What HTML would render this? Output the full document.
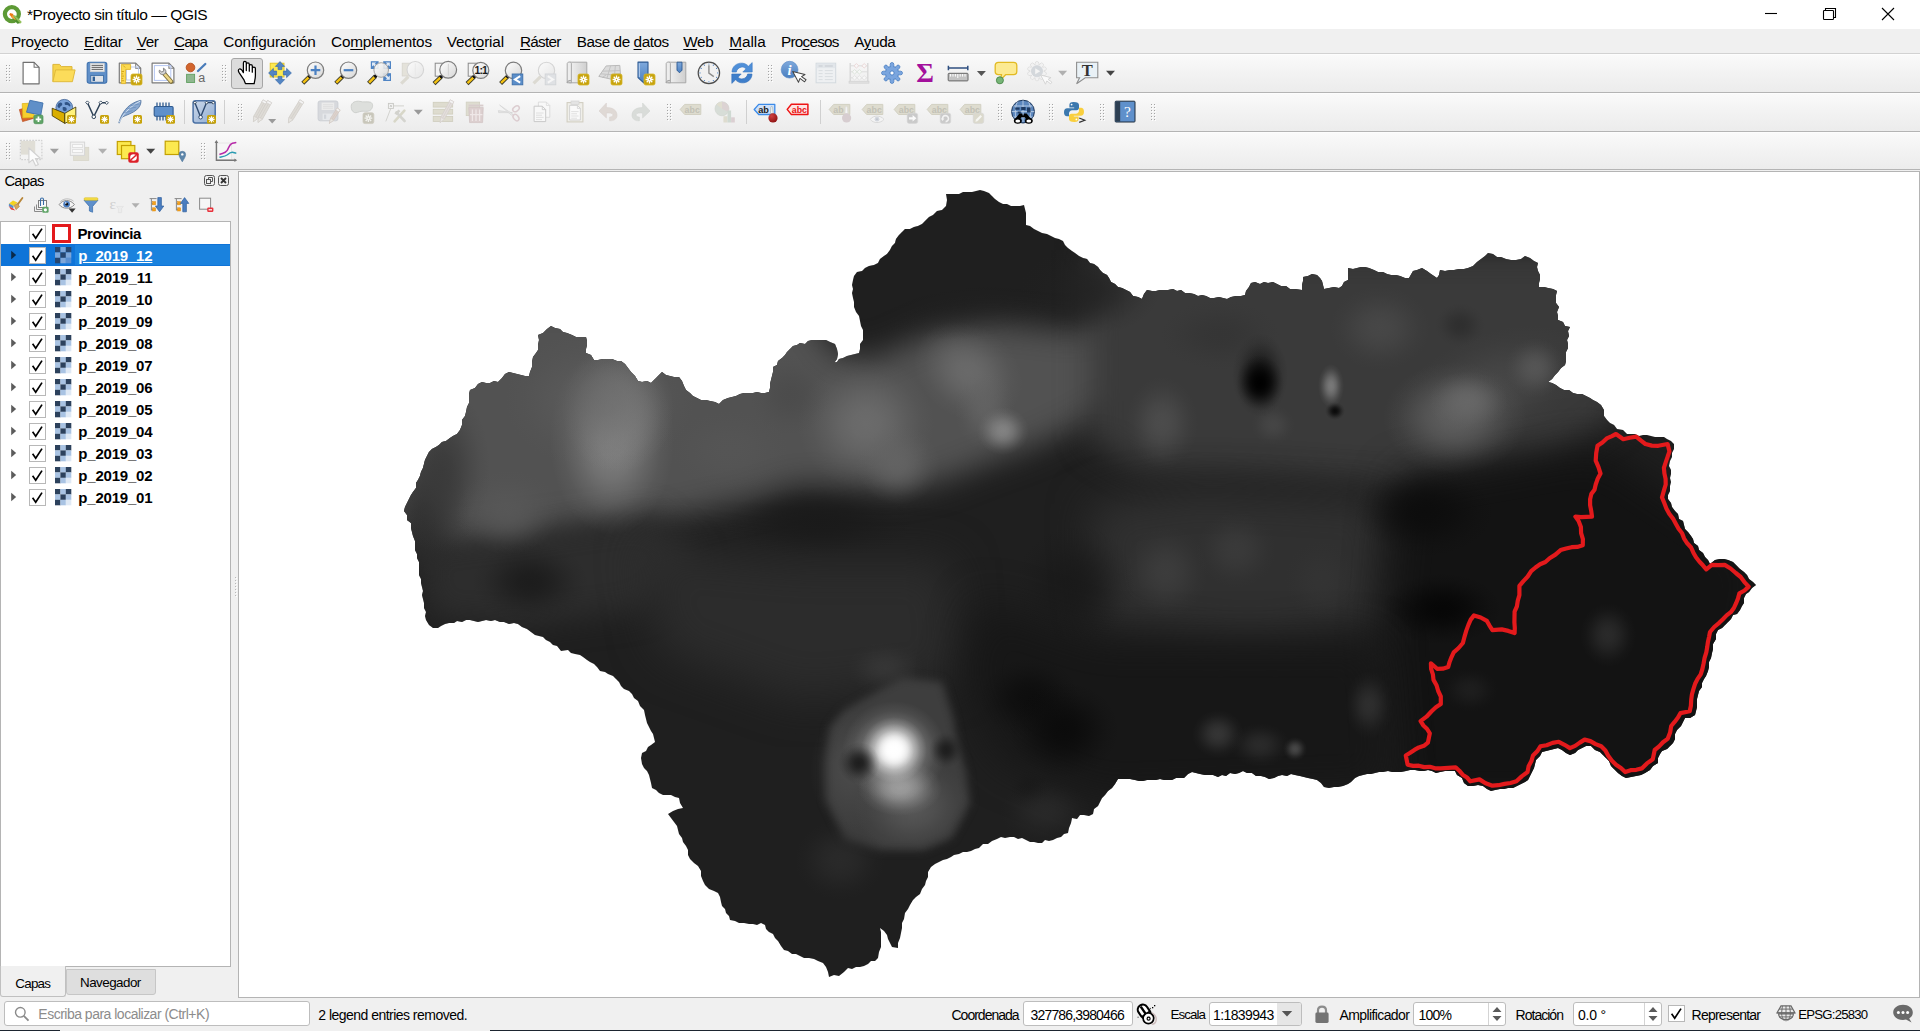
<!DOCTYPE html>
<html lang="es"><head><meta charset="utf-8"><title>*Proyecto sin título — QGIS</title>
<style>
html,body{margin:0;padding:0;}
body{width:1920px;height:1031px;overflow:hidden;background:#f0f0f0;position:relative;font-family:"Liberation Sans", sans-serif;}
.t{position:absolute;white-space:pre;line-height:1;}
.t u{text-decoration:underline;text-underline-offset:1.5px;text-decoration-thickness:1px;}
.abs{position:absolute;}
#title{left:0;top:0;width:1920px;height:29px;background:#fff;}
#menubar{left:0;top:29px;width:1920px;height:24px;background:#f0f0f0;}
.tb{left:0;width:1920px;background:linear-gradient(#fafafa,#f3f3f3 45%,#ececec);border-top:1px solid #fdfdfd;box-sizing:border-box;}
.tbline{left:0;width:1920px;height:1px;background:#b4b4b4;}
.hdl{width:3px;height:22px;background-image:radial-gradient(circle at .5px .5px,#a8a8a8 .55px,transparent .7px);background-size:3px 3px;}
.hdl2{width:4px;height:22px;}
.sep{width:1px;height:24px;background:#d0d0d0;}
.d{position:absolute;width:1px;height:1px;background:#a4a4a4;box-shadow:1px 1px 0 #fff;}
#canvas{left:238px;top:171px;width:1682px;height:827px;background:#fff;border:1px solid #b4b4b4;box-sizing:border-box;}
.mapsvg{position:absolute;left:239px;top:172px;}
#tree{left:0;top:221px;width:231px;height:746px;background:#fff;border:1px solid #b4b4b4;box-sizing:border-box;}
.cb{width:17px;height:17px;background:#fff;border:1px solid #b8b8b8;box-sizing:border-box;}
.ico{position:absolute;width:24px;height:24px;overflow:visible;}
.inp{background:#fff;border:1px solid #bdbdbd;border-radius:3px;box-sizing:border-box;}
</style></head>
<body>
<div id="title" class="abs"></div>
<svg class="abs" style="left:1740px;top:0" width="180" height="29" viewBox="1740 0 180 29" fill="none" stroke="#000" stroke-width="1.1"><path d="M1765 13.5H1777"/><rect x="1823.5" y="10.5" width="10" height="9" rx="0.8"/><path d="M1825.5 10.5V8.5H1835.5V17.5H1833.5"/><path d="M1882 8L1894 20M1894 8L1882 20"/></svg>
<div id="menubar" class="abs"></div>
<div class="abs tbline" style="top:53px;background:#d2d2d2"></div>
<div class="abs tb" style="top:54px;height:38px"></div>
<div class="abs tb" style="top:93px;height:38px"></div>
<div class="abs tb" style="top:132px;height:37px"></div>
<div class="abs tbline" style="top:92px"></div>
<div class="abs tbline" style="top:131px"></div>
<div class="abs tbline" style="top:169px"></div>
<i class="d" style="left:6px;top:65px"></i><i class="d" style="left:6px;top:68px"></i><i class="d" style="left:6px;top:71px"></i><i class="d" style="left:6px;top:74px"></i><i class="d" style="left:6px;top:77px"></i><i class="d" style="left:6px;top:80px"></i><i class="d" style="left:9px;top:65px"></i><i class="d" style="left:9px;top:68px"></i><i class="d" style="left:9px;top:71px"></i><i class="d" style="left:9px;top:74px"></i><i class="d" style="left:9px;top:77px"></i><i class="d" style="left:9px;top:80px"></i>
<i class="d" style="left:222px;top:65px"></i><i class="d" style="left:222px;top:68px"></i><i class="d" style="left:222px;top:71px"></i><i class="d" style="left:222px;top:74px"></i><i class="d" style="left:222px;top:77px"></i><i class="d" style="left:222px;top:80px"></i><i class="d" style="left:225px;top:65px"></i><i class="d" style="left:225px;top:68px"></i><i class="d" style="left:225px;top:71px"></i><i class="d" style="left:225px;top:74px"></i><i class="d" style="left:225px;top:77px"></i><i class="d" style="left:225px;top:80px"></i>
<i class="d" style="left:768px;top:65px"></i><i class="d" style="left:768px;top:68px"></i><i class="d" style="left:768px;top:71px"></i><i class="d" style="left:768px;top:74px"></i><i class="d" style="left:768px;top:77px"></i><i class="d" style="left:768px;top:80px"></i><i class="d" style="left:771px;top:65px"></i><i class="d" style="left:771px;top:68px"></i><i class="d" style="left:771px;top:71px"></i><i class="d" style="left:771px;top:74px"></i><i class="d" style="left:771px;top:77px"></i><i class="d" style="left:771px;top:80px"></i>
<i class="d" style="left:6px;top:104px"></i><i class="d" style="left:6px;top:107px"></i><i class="d" style="left:6px;top:110px"></i><i class="d" style="left:6px;top:113px"></i><i class="d" style="left:6px;top:116px"></i><i class="d" style="left:6px;top:119px"></i><i class="d" style="left:9px;top:104px"></i><i class="d" style="left:9px;top:107px"></i><i class="d" style="left:9px;top:110px"></i><i class="d" style="left:9px;top:113px"></i><i class="d" style="left:9px;top:116px"></i><i class="d" style="left:9px;top:119px"></i>
<i class="d" style="left:238px;top:104px"></i><i class="d" style="left:238px;top:107px"></i><i class="d" style="left:238px;top:110px"></i><i class="d" style="left:238px;top:113px"></i><i class="d" style="left:238px;top:116px"></i><i class="d" style="left:238px;top:119px"></i><i class="d" style="left:241px;top:104px"></i><i class="d" style="left:241px;top:107px"></i><i class="d" style="left:241px;top:110px"></i><i class="d" style="left:241px;top:113px"></i><i class="d" style="left:241px;top:116px"></i><i class="d" style="left:241px;top:119px"></i>
<i class="d" style="left:667px;top:104px"></i><i class="d" style="left:667px;top:107px"></i><i class="d" style="left:667px;top:110px"></i><i class="d" style="left:667px;top:113px"></i><i class="d" style="left:667px;top:116px"></i><i class="d" style="left:667px;top:119px"></i><i class="d" style="left:670px;top:104px"></i><i class="d" style="left:670px;top:107px"></i><i class="d" style="left:670px;top:110px"></i><i class="d" style="left:670px;top:113px"></i><i class="d" style="left:670px;top:116px"></i><i class="d" style="left:670px;top:119px"></i>
<i class="d" style="left:998px;top:104px"></i><i class="d" style="left:998px;top:107px"></i><i class="d" style="left:998px;top:110px"></i><i class="d" style="left:998px;top:113px"></i><i class="d" style="left:998px;top:116px"></i><i class="d" style="left:998px;top:119px"></i><i class="d" style="left:1001px;top:104px"></i><i class="d" style="left:1001px;top:107px"></i><i class="d" style="left:1001px;top:110px"></i><i class="d" style="left:1001px;top:113px"></i><i class="d" style="left:1001px;top:116px"></i><i class="d" style="left:1001px;top:119px"></i>
<i class="d" style="left:1049px;top:104px"></i><i class="d" style="left:1049px;top:107px"></i><i class="d" style="left:1049px;top:110px"></i><i class="d" style="left:1049px;top:113px"></i><i class="d" style="left:1049px;top:116px"></i><i class="d" style="left:1049px;top:119px"></i><i class="d" style="left:1052px;top:104px"></i><i class="d" style="left:1052px;top:107px"></i><i class="d" style="left:1052px;top:110px"></i><i class="d" style="left:1052px;top:113px"></i><i class="d" style="left:1052px;top:116px"></i><i class="d" style="left:1052px;top:119px"></i>
<i class="d" style="left:1100px;top:104px"></i><i class="d" style="left:1100px;top:107px"></i><i class="d" style="left:1100px;top:110px"></i><i class="d" style="left:1100px;top:113px"></i><i class="d" style="left:1100px;top:116px"></i><i class="d" style="left:1100px;top:119px"></i><i class="d" style="left:1103px;top:104px"></i><i class="d" style="left:1103px;top:107px"></i><i class="d" style="left:1103px;top:110px"></i><i class="d" style="left:1103px;top:113px"></i><i class="d" style="left:1103px;top:116px"></i><i class="d" style="left:1103px;top:119px"></i>
<i class="d" style="left:1151px;top:104px"></i><i class="d" style="left:1151px;top:107px"></i><i class="d" style="left:1151px;top:110px"></i><i class="d" style="left:1151px;top:113px"></i><i class="d" style="left:1151px;top:116px"></i><i class="d" style="left:1151px;top:119px"></i><i class="d" style="left:1154px;top:104px"></i><i class="d" style="left:1154px;top:107px"></i><i class="d" style="left:1154px;top:110px"></i><i class="d" style="left:1154px;top:113px"></i><i class="d" style="left:1154px;top:116px"></i><i class="d" style="left:1154px;top:119px"></i>
<i class="d" style="left:6px;top:143px"></i><i class="d" style="left:6px;top:146px"></i><i class="d" style="left:6px;top:149px"></i><i class="d" style="left:6px;top:152px"></i><i class="d" style="left:6px;top:155px"></i><i class="d" style="left:6px;top:158px"></i><i class="d" style="left:9px;top:143px"></i><i class="d" style="left:9px;top:146px"></i><i class="d" style="left:9px;top:149px"></i><i class="d" style="left:9px;top:152px"></i><i class="d" style="left:9px;top:155px"></i><i class="d" style="left:9px;top:158px"></i>
<i class="d" style="left:201px;top:143px"></i><i class="d" style="left:201px;top:146px"></i><i class="d" style="left:201px;top:149px"></i><i class="d" style="left:201px;top:152px"></i><i class="d" style="left:201px;top:155px"></i><i class="d" style="left:201px;top:158px"></i><i class="d" style="left:204px;top:143px"></i><i class="d" style="left:204px;top:146px"></i><i class="d" style="left:204px;top:149px"></i><i class="d" style="left:204px;top:152px"></i><i class="d" style="left:204px;top:155px"></i><i class="d" style="left:204px;top:158px"></i>
<div class="abs sep" style="left:184px;top:100px"></div>
<div class="abs sep" style="left:224px;top:100px"></div>
<div class="abs sep" style="left:746px;top:100px"></div>
<div class="abs sep" style="left:820px;top:100px"></div>
<div class="abs" style="left:231px;top:58px;width:32px;height:31px;background:#dcdcdc;border:1px solid #a6a6a6;border-radius:3px;box-sizing:border-box"></div>
<div id="canvas" class="abs"></div>
<i class="d" style="left:235px;top:577px;background:#b8b8b8"></i><i class="d" style="left:235px;top:580px;background:#b8b8b8"></i><i class="d" style="left:235px;top:583px;background:#b8b8b8"></i><i class="d" style="left:235px;top:586px;background:#b8b8b8"></i><i class="d" style="left:235px;top:589px;background:#b8b8b8"></i><i class="d" style="left:235px;top:592px;background:#b8b8b8"></i><i class="d" style="left:235px;top:595px;background:#b8b8b8"></i>
<svg class="abs" style="left:202px;top:174px" width="30" height="14" viewBox="202 174 30 14" fill="none" stroke="#555" stroke-width="1"><rect x="204.5" y="175.5" width="10" height="10" rx="2"/><rect x="206.5" y="179.5" width="4" height="4"/><path d="M208.5 179.5V177.5H212.5V181.5H210.5"/><rect x="218.5" y="175.5" width="10" height="10" rx="2"/><path d="M221 178L226 183M226 178L221 183" stroke="#333" stroke-width="1.8"/></svg>
<div id="tree" class="abs"></div>
<div class="abs" style="left:1px;top:244px;width:229px;height:22px;background:#0f74d8"></div>
<div class="abs" style="left:75px;top:245px;width:155px;height:20px;background:#1a82de"></div>
<div class="abs cb" style="left:29px;top:225px"></div>
<svg class="abs" style="left:29px;top:225px" width="17" height="17" viewBox="0 0 17 17"><path d="M3.6 8.8L6.7 13.2L13 3.6" fill="none" stroke="#000" stroke-width="1.7"/></svg>
<div class="abs" style="left:52px;top:224px;width:19px;height:19px;border:3px solid #e31a1c;background:#fff;box-sizing:border-box"></div>
<div class="abs cb" style="left:29px;top:247px"></div>
<svg class="abs" style="left:29px;top:247px" width="17" height="17" viewBox="0 0 17 17"><path d="M3.6 8.8L6.7 13.2L13 3.6" fill="none" stroke="#000" stroke-width="1.7"/></svg>
<svg class="abs" style="left:10px;top:250px" width="8" height="10" viewBox="0 0 8 10"><path d="M1.2 0.8L6.2 5L1.2 9.2Z" fill="#0a2a4a"/></svg>
<svg class="abs" style="left:54.5px;top:247px" width="17" height="17" viewBox="0 0 17 17"><rect x="0" y="0" width="5.5" height="5.5" fill="#27466f"/><rect x="5.4" y="0" width="5.5" height="5.5" fill="#7da6d9"/><rect x="10.8" y="0" width="5.5" height="5.5" fill="#27466f"/><rect x="0" y="5.4" width="5.5" height="5.5" fill="#7da6d9"/><rect x="5.4" y="5.4" width="5.5" height="5.5" fill="#27466f"/><rect x="10.8" y="5.4" width="5.5" height="5.5" fill="#7da6d9"/><rect x="0" y="10.8" width="5.5" height="5.5" fill="#27466f"/><rect x="5.4" y="10.8" width="5.5" height="5.5" fill="#7da6d9"/><rect x="10.8" y="10.8" width="5.5" height="5.5" fill="#5a8fd0"/></svg>
<div class="abs cb" style="left:29px;top:269px"></div>
<svg class="abs" style="left:29px;top:269px" width="17" height="17" viewBox="0 0 17 17"><path d="M3.6 8.8L6.7 13.2L13 3.6" fill="none" stroke="#000" stroke-width="1.7"/></svg>
<svg class="abs" style="left:10px;top:272px" width="8" height="10" viewBox="0 0 8 10"><path d="M1.2 0.8L6.2 5L1.2 9.2Z" fill="#5c5c5c"/></svg>
<svg class="abs" style="left:54.5px;top:269px" width="17" height="17" viewBox="0 0 17 17"><rect x="0" y="0" width="5.5" height="5.5" fill="#2c415c"/><rect x="5.4" y="0" width="5.5" height="5.5" fill="#a9c3e3"/><rect x="10.8" y="0" width="5.5" height="5.5" fill="#2c415c"/><rect x="0" y="5.4" width="5.5" height="5.5" fill="#a9c3e3"/><rect x="5.4" y="5.4" width="5.5" height="5.5" fill="#2c415c"/><rect x="10.8" y="5.4" width="5.5" height="5.5" fill="#a9c3e3"/><rect x="0" y="10.8" width="5.5" height="5.5" fill="#2c415c"/><rect x="5.4" y="10.8" width="5.5" height="5.5" fill="#a9c3e3"/><rect x="10.8" y="10.8" width="5.5" height="5.5" fill="#dfe9f5"/></svg>
<div class="abs cb" style="left:29px;top:291px"></div>
<svg class="abs" style="left:29px;top:291px" width="17" height="17" viewBox="0 0 17 17"><path d="M3.6 8.8L6.7 13.2L13 3.6" fill="none" stroke="#000" stroke-width="1.7"/></svg>
<svg class="abs" style="left:10px;top:294px" width="8" height="10" viewBox="0 0 8 10"><path d="M1.2 0.8L6.2 5L1.2 9.2Z" fill="#5c5c5c"/></svg>
<svg class="abs" style="left:54.5px;top:291px" width="17" height="17" viewBox="0 0 17 17"><rect x="0" y="0" width="5.5" height="5.5" fill="#2c415c"/><rect x="5.4" y="0" width="5.5" height="5.5" fill="#a9c3e3"/><rect x="10.8" y="0" width="5.5" height="5.5" fill="#2c415c"/><rect x="0" y="5.4" width="5.5" height="5.5" fill="#a9c3e3"/><rect x="5.4" y="5.4" width="5.5" height="5.5" fill="#2c415c"/><rect x="10.8" y="5.4" width="5.5" height="5.5" fill="#a9c3e3"/><rect x="0" y="10.8" width="5.5" height="5.5" fill="#2c415c"/><rect x="5.4" y="10.8" width="5.5" height="5.5" fill="#a9c3e3"/><rect x="10.8" y="10.8" width="5.5" height="5.5" fill="#dfe9f5"/></svg>
<div class="abs cb" style="left:29px;top:313px"></div>
<svg class="abs" style="left:29px;top:313px" width="17" height="17" viewBox="0 0 17 17"><path d="M3.6 8.8L6.7 13.2L13 3.6" fill="none" stroke="#000" stroke-width="1.7"/></svg>
<svg class="abs" style="left:10px;top:316px" width="8" height="10" viewBox="0 0 8 10"><path d="M1.2 0.8L6.2 5L1.2 9.2Z" fill="#5c5c5c"/></svg>
<svg class="abs" style="left:54.5px;top:313px" width="17" height="17" viewBox="0 0 17 17"><rect x="0" y="0" width="5.5" height="5.5" fill="#2c415c"/><rect x="5.4" y="0" width="5.5" height="5.5" fill="#a9c3e3"/><rect x="10.8" y="0" width="5.5" height="5.5" fill="#2c415c"/><rect x="0" y="5.4" width="5.5" height="5.5" fill="#a9c3e3"/><rect x="5.4" y="5.4" width="5.5" height="5.5" fill="#2c415c"/><rect x="10.8" y="5.4" width="5.5" height="5.5" fill="#a9c3e3"/><rect x="0" y="10.8" width="5.5" height="5.5" fill="#2c415c"/><rect x="5.4" y="10.8" width="5.5" height="5.5" fill="#a9c3e3"/><rect x="10.8" y="10.8" width="5.5" height="5.5" fill="#dfe9f5"/></svg>
<div class="abs cb" style="left:29px;top:335px"></div>
<svg class="abs" style="left:29px;top:335px" width="17" height="17" viewBox="0 0 17 17"><path d="M3.6 8.8L6.7 13.2L13 3.6" fill="none" stroke="#000" stroke-width="1.7"/></svg>
<svg class="abs" style="left:10px;top:338px" width="8" height="10" viewBox="0 0 8 10"><path d="M1.2 0.8L6.2 5L1.2 9.2Z" fill="#5c5c5c"/></svg>
<svg class="abs" style="left:54.5px;top:335px" width="17" height="17" viewBox="0 0 17 17"><rect x="0" y="0" width="5.5" height="5.5" fill="#2c415c"/><rect x="5.4" y="0" width="5.5" height="5.5" fill="#a9c3e3"/><rect x="10.8" y="0" width="5.5" height="5.5" fill="#2c415c"/><rect x="0" y="5.4" width="5.5" height="5.5" fill="#a9c3e3"/><rect x="5.4" y="5.4" width="5.5" height="5.5" fill="#2c415c"/><rect x="10.8" y="5.4" width="5.5" height="5.5" fill="#a9c3e3"/><rect x="0" y="10.8" width="5.5" height="5.5" fill="#2c415c"/><rect x="5.4" y="10.8" width="5.5" height="5.5" fill="#a9c3e3"/><rect x="10.8" y="10.8" width="5.5" height="5.5" fill="#dfe9f5"/></svg>
<div class="abs cb" style="left:29px;top:357px"></div>
<svg class="abs" style="left:29px;top:357px" width="17" height="17" viewBox="0 0 17 17"><path d="M3.6 8.8L6.7 13.2L13 3.6" fill="none" stroke="#000" stroke-width="1.7"/></svg>
<svg class="abs" style="left:10px;top:360px" width="8" height="10" viewBox="0 0 8 10"><path d="M1.2 0.8L6.2 5L1.2 9.2Z" fill="#5c5c5c"/></svg>
<svg class="abs" style="left:54.5px;top:357px" width="17" height="17" viewBox="0 0 17 17"><rect x="0" y="0" width="5.5" height="5.5" fill="#2c415c"/><rect x="5.4" y="0" width="5.5" height="5.5" fill="#a9c3e3"/><rect x="10.8" y="0" width="5.5" height="5.5" fill="#2c415c"/><rect x="0" y="5.4" width="5.5" height="5.5" fill="#a9c3e3"/><rect x="5.4" y="5.4" width="5.5" height="5.5" fill="#2c415c"/><rect x="10.8" y="5.4" width="5.5" height="5.5" fill="#a9c3e3"/><rect x="0" y="10.8" width="5.5" height="5.5" fill="#2c415c"/><rect x="5.4" y="10.8" width="5.5" height="5.5" fill="#a9c3e3"/><rect x="10.8" y="10.8" width="5.5" height="5.5" fill="#dfe9f5"/></svg>
<div class="abs cb" style="left:29px;top:379px"></div>
<svg class="abs" style="left:29px;top:379px" width="17" height="17" viewBox="0 0 17 17"><path d="M3.6 8.8L6.7 13.2L13 3.6" fill="none" stroke="#000" stroke-width="1.7"/></svg>
<svg class="abs" style="left:10px;top:382px" width="8" height="10" viewBox="0 0 8 10"><path d="M1.2 0.8L6.2 5L1.2 9.2Z" fill="#5c5c5c"/></svg>
<svg class="abs" style="left:54.5px;top:379px" width="17" height="17" viewBox="0 0 17 17"><rect x="0" y="0" width="5.5" height="5.5" fill="#2c415c"/><rect x="5.4" y="0" width="5.5" height="5.5" fill="#a9c3e3"/><rect x="10.8" y="0" width="5.5" height="5.5" fill="#2c415c"/><rect x="0" y="5.4" width="5.5" height="5.5" fill="#a9c3e3"/><rect x="5.4" y="5.4" width="5.5" height="5.5" fill="#2c415c"/><rect x="10.8" y="5.4" width="5.5" height="5.5" fill="#a9c3e3"/><rect x="0" y="10.8" width="5.5" height="5.5" fill="#2c415c"/><rect x="5.4" y="10.8" width="5.5" height="5.5" fill="#a9c3e3"/><rect x="10.8" y="10.8" width="5.5" height="5.5" fill="#dfe9f5"/></svg>
<div class="abs cb" style="left:29px;top:401px"></div>
<svg class="abs" style="left:29px;top:401px" width="17" height="17" viewBox="0 0 17 17"><path d="M3.6 8.8L6.7 13.2L13 3.6" fill="none" stroke="#000" stroke-width="1.7"/></svg>
<svg class="abs" style="left:10px;top:404px" width="8" height="10" viewBox="0 0 8 10"><path d="M1.2 0.8L6.2 5L1.2 9.2Z" fill="#5c5c5c"/></svg>
<svg class="abs" style="left:54.5px;top:401px" width="17" height="17" viewBox="0 0 17 17"><rect x="0" y="0" width="5.5" height="5.5" fill="#2c415c"/><rect x="5.4" y="0" width="5.5" height="5.5" fill="#a9c3e3"/><rect x="10.8" y="0" width="5.5" height="5.5" fill="#2c415c"/><rect x="0" y="5.4" width="5.5" height="5.5" fill="#a9c3e3"/><rect x="5.4" y="5.4" width="5.5" height="5.5" fill="#2c415c"/><rect x="10.8" y="5.4" width="5.5" height="5.5" fill="#a9c3e3"/><rect x="0" y="10.8" width="5.5" height="5.5" fill="#2c415c"/><rect x="5.4" y="10.8" width="5.5" height="5.5" fill="#a9c3e3"/><rect x="10.8" y="10.8" width="5.5" height="5.5" fill="#dfe9f5"/></svg>
<div class="abs cb" style="left:29px;top:423px"></div>
<svg class="abs" style="left:29px;top:423px" width="17" height="17" viewBox="0 0 17 17"><path d="M3.6 8.8L6.7 13.2L13 3.6" fill="none" stroke="#000" stroke-width="1.7"/></svg>
<svg class="abs" style="left:10px;top:426px" width="8" height="10" viewBox="0 0 8 10"><path d="M1.2 0.8L6.2 5L1.2 9.2Z" fill="#5c5c5c"/></svg>
<svg class="abs" style="left:54.5px;top:423px" width="17" height="17" viewBox="0 0 17 17"><rect x="0" y="0" width="5.5" height="5.5" fill="#2c415c"/><rect x="5.4" y="0" width="5.5" height="5.5" fill="#a9c3e3"/><rect x="10.8" y="0" width="5.5" height="5.5" fill="#2c415c"/><rect x="0" y="5.4" width="5.5" height="5.5" fill="#a9c3e3"/><rect x="5.4" y="5.4" width="5.5" height="5.5" fill="#2c415c"/><rect x="10.8" y="5.4" width="5.5" height="5.5" fill="#a9c3e3"/><rect x="0" y="10.8" width="5.5" height="5.5" fill="#2c415c"/><rect x="5.4" y="10.8" width="5.5" height="5.5" fill="#a9c3e3"/><rect x="10.8" y="10.8" width="5.5" height="5.5" fill="#dfe9f5"/></svg>
<div class="abs cb" style="left:29px;top:445px"></div>
<svg class="abs" style="left:29px;top:445px" width="17" height="17" viewBox="0 0 17 17"><path d="M3.6 8.8L6.7 13.2L13 3.6" fill="none" stroke="#000" stroke-width="1.7"/></svg>
<svg class="abs" style="left:10px;top:448px" width="8" height="10" viewBox="0 0 8 10"><path d="M1.2 0.8L6.2 5L1.2 9.2Z" fill="#5c5c5c"/></svg>
<svg class="abs" style="left:54.5px;top:445px" width="17" height="17" viewBox="0 0 17 17"><rect x="0" y="0" width="5.5" height="5.5" fill="#2c415c"/><rect x="5.4" y="0" width="5.5" height="5.5" fill="#a9c3e3"/><rect x="10.8" y="0" width="5.5" height="5.5" fill="#2c415c"/><rect x="0" y="5.4" width="5.5" height="5.5" fill="#a9c3e3"/><rect x="5.4" y="5.4" width="5.5" height="5.5" fill="#2c415c"/><rect x="10.8" y="5.4" width="5.5" height="5.5" fill="#a9c3e3"/><rect x="0" y="10.8" width="5.5" height="5.5" fill="#2c415c"/><rect x="5.4" y="10.8" width="5.5" height="5.5" fill="#a9c3e3"/><rect x="10.8" y="10.8" width="5.5" height="5.5" fill="#dfe9f5"/></svg>
<div class="abs cb" style="left:29px;top:467px"></div>
<svg class="abs" style="left:29px;top:467px" width="17" height="17" viewBox="0 0 17 17"><path d="M3.6 8.8L6.7 13.2L13 3.6" fill="none" stroke="#000" stroke-width="1.7"/></svg>
<svg class="abs" style="left:10px;top:470px" width="8" height="10" viewBox="0 0 8 10"><path d="M1.2 0.8L6.2 5L1.2 9.2Z" fill="#5c5c5c"/></svg>
<svg class="abs" style="left:54.5px;top:467px" width="17" height="17" viewBox="0 0 17 17"><rect x="0" y="0" width="5.5" height="5.5" fill="#2c415c"/><rect x="5.4" y="0" width="5.5" height="5.5" fill="#a9c3e3"/><rect x="10.8" y="0" width="5.5" height="5.5" fill="#2c415c"/><rect x="0" y="5.4" width="5.5" height="5.5" fill="#a9c3e3"/><rect x="5.4" y="5.4" width="5.5" height="5.5" fill="#2c415c"/><rect x="10.8" y="5.4" width="5.5" height="5.5" fill="#a9c3e3"/><rect x="0" y="10.8" width="5.5" height="5.5" fill="#2c415c"/><rect x="5.4" y="10.8" width="5.5" height="5.5" fill="#a9c3e3"/><rect x="10.8" y="10.8" width="5.5" height="5.5" fill="#dfe9f5"/></svg>
<div class="abs cb" style="left:29px;top:489px"></div>
<svg class="abs" style="left:29px;top:489px" width="17" height="17" viewBox="0 0 17 17"><path d="M3.6 8.8L6.7 13.2L13 3.6" fill="none" stroke="#000" stroke-width="1.7"/></svg>
<svg class="abs" style="left:10px;top:492px" width="8" height="10" viewBox="0 0 8 10"><path d="M1.2 0.8L6.2 5L1.2 9.2Z" fill="#5c5c5c"/></svg>
<svg class="abs" style="left:54.5px;top:489px" width="17" height="17" viewBox="0 0 17 17"><rect x="0" y="0" width="5.5" height="5.5" fill="#2c415c"/><rect x="5.4" y="0" width="5.5" height="5.5" fill="#a9c3e3"/><rect x="10.8" y="0" width="5.5" height="5.5" fill="#2c415c"/><rect x="0" y="5.4" width="5.5" height="5.5" fill="#a9c3e3"/><rect x="5.4" y="5.4" width="5.5" height="5.5" fill="#2c415c"/><rect x="10.8" y="5.4" width="5.5" height="5.5" fill="#a9c3e3"/><rect x="0" y="10.8" width="5.5" height="5.5" fill="#2c415c"/><rect x="5.4" y="10.8" width="5.5" height="5.5" fill="#a9c3e3"/><rect x="10.8" y="10.8" width="5.5" height="5.5" fill="#dfe9f5"/></svg>
<div class="abs" style="left:66px;top:969px;width:90px;height:26px;background:#dedede;border:1px solid #c6c6c6;border-radius:0 0 3px 3px;box-sizing:border-box"></div>
<div class="abs" style="left:0px;top:966px;width:66px;height:31px;background:#f0f0f0;border:1px solid #c0c0c0;border-top:none;border-radius:0 0 3px 3px;box-sizing:border-box"></div>
<div class="abs inp" style="left:4px;top:1001px;width:306px;height:25px"></div>
<svg class="abs" style="left:13px;top:1005px" width="18" height="18" viewBox="0 0 18 18" fill="none" stroke="#8a8a8a" stroke-width="1.4"><circle cx="7.3" cy="7.3" r="4.8"/><path d="M10.8 10.8L15.5 15.7" stroke-width="1.8"/></svg>
<div class="abs inp" style="left:1023px;top:1001px;width:110px;height:25px"></div>
<div class="abs inp" style="left:1209px;top:1002px;width:93px;height:24px"></div>
<div class="abs" style="left:1277px;top:1003px;width:24px;height:22px;background:#e6e6e6;border-radius:0 2px 2px 0"></div>
<svg class="abs" style="left:1281px;top:1010px" width="12" height="8" viewBox="0 0 12 8"><path d="M0.8 1L6 6.6L11.2 1Z" fill="#555"/></svg>
<div class="abs inp" style="left:1413px;top:1002px;width:93px;height:24px"></div>
<div class="abs" style="left:1488px;top:1003px;width:1px;height:22px;background:#d4d4d4"></div>
<svg class="abs" style="left:1491px;top:1004px" width="12" height="20" viewBox="0 0 12 20"><path d="M1.5 8L6 3L10.5 8Z M1.5 12L6 17L10.5 12Z" fill="#5a5a5a"/></svg>
<div class="abs inp" style="left:1573px;top:1002px;width:89px;height:24px"></div>
<div class="abs" style="left:1644px;top:1003px;width:1px;height:22px;background:#d4d4d4"></div>
<svg class="abs" style="left:1647px;top:1004px" width="12" height="20" viewBox="0 0 12 20"><path d="M1.5 8L6 3L10.5 8Z M1.5 12L6 17L10.5 12Z" fill="#5a5a5a"/></svg>
<div class="abs cb" style="left:1668px;top:1005px"></div>
<svg class="abs" style="left:1668px;top:1005px" width="17" height="17" viewBox="0 0 17 17"><path d="M3.6 8.8L6.7 13.2L13 3.6" fill="none" stroke="#000" stroke-width="1.7"/></svg>
<div class="abs" style="left:0;top:1030px;width:60px;height:1px;background:#1d2530"></div><div class="abs" style="left:490px;top:1030px;width:1430px;height:1px;background:#1d2530"></div>
<svg class="mapsvg" width="1680" height="825" viewBox="239 172 1680 825">
<defs>
<clipPath id="land"><path shape-rendering="crispEdges" d="M433.0 628.0 L429.0 625.0 L426.0 620.0 L425.0 616.0 L426.0 612.0 L424.0 608.0 L424.0 603.0 L423.0 599.0 L422.0 595.0 L423.0 591.0 L422.0 587.0 L421.0 583.0 L421.0 579.0 L419.0 575.0 L419.0 570.0 L419.0 566.0 L419.0 562.0 L417.0 558.0 L417.0 554.0 L415.0 550.0 L415.0 545.0 L415.0 541.0 L413.0 536.0 L412.0 532.0 L411.0 528.0 L411.0 523.0 L407.0 520.0 L407.0 515.0 L404.0 511.0 L405.0 507.0 L407.0 503.0 L409.0 499.0 L411.0 495.0 L413.0 492.0 L416.0 488.0 L416.0 483.0 L418.0 480.0 L420.0 476.0 L421.0 472.0 L423.0 468.0 L424.0 464.0 L425.0 460.0 L427.0 456.0 L429.0 452.0 L432.0 449.0 L436.0 447.0 L439.0 445.0 L442.0 442.0 L446.0 441.0 L450.0 438.0 L453.0 436.0 L457.0 434.0 L460.0 430.0 L462.0 425.0 L462.0 420.0 L465.0 416.0 L466.0 412.0 L467.0 407.0 L469.0 403.0 L469.0 399.0 L469.0 394.0 L470.0 390.0 L475.0 388.0 L478.0 384.0 L482.0 382.0 L486.0 383.0 L490.0 383.0 L494.0 381.0 L498.0 382.0 L502.0 378.0 L505.0 374.0 L509.0 372.0 L513.0 373.0 L517.0 374.0 L521.0 375.0 L525.0 376.0 L529.0 376.0 L530.0 372.0 L532.0 367.0 L532.0 362.0 L533.0 357.0 L536.0 353.0 L538.0 350.0 L538.0 345.0 L539.0 340.0 L538.0 335.0 L543.0 333.0 L547.0 329.0 L551.0 326.0 L555.0 328.0 L560.0 329.0 L563.0 332.0 L567.0 333.0 L572.0 335.0 L576.0 337.0 L581.0 337.0 L586.0 337.0 L587.0 341.0 L587.0 345.0 L586.0 349.0 L586.0 353.0 L591.0 355.0 L594.0 360.0 L598.0 360.0 L603.0 359.0 L608.0 359.0 L612.0 359.0 L617.0 361.0 L621.0 361.0 L625.0 364.0 L628.0 368.0 L631.0 372.0 L635.0 376.0 L638.0 381.0 L642.0 382.0 L647.0 381.0 L651.0 383.0 L655.0 379.0 L658.0 376.0 L662.0 372.0 L666.0 375.0 L670.0 376.0 L674.0 377.0 L679.0 377.0 L682.0 381.0 L684.0 386.0 L686.0 390.0 L690.0 393.0 L693.0 396.0 L697.0 398.0 L701.0 400.0 L706.0 400.0 L710.0 401.0 L715.0 402.0 L719.0 404.0 L723.0 400.0 L728.0 398.0 L732.0 397.0 L736.0 396.0 L740.0 394.0 L744.0 393.0 L749.0 393.0 L753.0 393.0 L757.0 392.0 L761.0 393.0 L765.0 393.0 L769.0 392.0 L770.0 388.0 L770.0 384.0 L771.0 380.0 L772.0 376.0 L773.0 372.0 L773.0 367.0 L777.0 365.0 L778.0 361.0 L782.0 358.0 L785.0 355.0 L787.0 352.0 L790.0 349.0 L793.0 346.0 L797.0 345.0 L800.0 343.0 L805.0 344.0 L808.0 341.0 L812.0 340.0 L816.0 340.0 L820.0 340.0 L826.0 340.0 L830.0 342.0 L835.0 344.0 L837.0 349.0 L838.0 354.0 L837.0 359.0 L834.0 363.0 L831.0 367.0 L827.0 370.0 L830.0 367.0 L832.0 363.0 L837.0 362.0 L839.0 359.0 L843.0 358.0 L847.0 356.0 L851.0 355.0 L855.0 354.0 L859.0 353.0 L860.0 349.0 L860.0 344.0 L863.0 340.0 L863.0 335.0 L863.0 330.0 L861.0 326.0 L860.0 321.0 L859.0 316.0 L856.0 312.0 L854.0 307.0 L854.0 302.0 L853.0 298.0 L852.0 293.0 L853.0 289.0 L852.0 285.0 L853.0 280.0 L854.0 276.0 L857.0 272.0 L862.0 271.0 L865.0 268.0 L869.0 266.0 L874.0 265.0 L878.0 263.0 L880.0 259.0 L884.0 256.0 L887.0 254.0 L890.0 250.0 L892.0 246.0 L895.0 243.0 L896.0 239.0 L899.0 235.0 L902.0 232.0 L905.0 229.0 L910.0 229.0 L914.0 227.0 L918.0 226.0 L922.0 224.0 L925.0 221.0 L929.0 217.0 L933.0 215.0 L937.0 211.0 L942.0 210.0 L946.0 206.0 L947.0 200.0 L946.0 194.0 L950.0 194.0 L954.0 194.0 L959.0 194.0 L963.0 192.0 L967.0 192.0 L972.0 192.0 L976.0 191.0 L980.0 190.0 L984.0 191.0 L989.0 193.0 L992.0 196.0 L995.0 199.0 L999.0 202.0 L1003.0 204.0 L1007.0 204.0 L1011.0 206.0 L1015.0 206.0 L1020.0 206.0 L1024.0 205.0 L1025.0 209.0 L1026.0 213.0 L1026.0 217.0 L1026.0 221.0 L1026.0 225.0 L1030.0 226.0 L1034.0 229.0 L1038.0 231.0 L1042.0 233.0 L1047.0 234.0 L1051.0 236.0 L1055.0 238.0 L1059.0 239.0 L1063.0 241.0 L1065.0 245.0 L1068.0 248.0 L1072.0 251.0 L1075.0 253.0 L1079.0 256.0 L1083.0 258.0 L1087.0 259.0 L1090.0 263.0 L1094.0 264.0 L1098.0 267.0 L1100.0 270.0 L1103.0 273.0 L1107.0 275.0 L1109.0 278.0 L1111.0 282.0 L1115.0 284.0 L1118.0 287.0 L1122.0 288.0 L1126.0 290.0 L1130.0 292.0 L1133.0 296.0 L1138.0 297.0 L1142.0 299.0 L1144.0 294.0 L1147.0 290.0 L1152.0 291.0 L1156.0 291.0 L1160.0 290.0 L1164.0 290.0 L1168.0 290.0 L1173.0 289.0 L1177.0 291.0 L1181.0 290.0 L1185.0 293.0 L1189.0 293.0 L1194.0 294.0 L1198.0 296.0 L1202.0 295.0 L1206.0 296.0 L1210.0 298.0 L1214.0 298.0 L1219.0 297.0 L1223.0 298.0 L1227.0 299.0 L1231.0 297.0 L1236.0 296.0 L1241.0 296.0 L1245.0 295.0 L1246.0 291.0 L1249.0 287.0 L1251.0 283.0 L1255.0 282.0 L1260.0 284.0 L1264.0 282.0 L1268.0 283.0 L1273.0 282.0 L1277.0 284.0 L1281.0 286.0 L1286.0 286.0 L1290.0 289.0 L1295.0 289.0 L1302.0 290.0 L1302.0 285.0 L1303.0 281.0 L1303.0 277.0 L1308.0 276.0 L1312.0 274.0 L1317.0 275.0 L1320.0 278.0 L1322.0 281.0 L1324.0 289.0 L1329.0 288.0 L1334.0 287.0 L1339.0 288.0 L1342.0 286.0 L1344.0 282.0 L1348.0 280.0 L1348.0 274.0 L1348.0 268.0 L1353.0 269.0 L1357.0 268.0 L1361.0 267.0 L1365.0 267.0 L1369.0 268.0 L1374.0 270.0 L1378.0 272.0 L1383.0 272.0 L1387.0 274.0 L1391.0 275.0 L1396.0 275.0 L1400.0 276.0 L1405.0 278.0 L1409.0 278.0 L1413.0 271.0 L1417.0 270.0 L1422.0 268.0 L1427.0 271.0 L1431.0 274.0 L1437.0 278.0 L1439.0 275.0 L1440.0 270.0 L1445.0 271.0 L1450.0 270.0 L1454.0 270.0 L1459.0 269.0 L1464.0 269.0 L1468.0 268.0 L1473.0 266.0 L1477.0 262.0 L1481.0 259.0 L1485.0 256.0 L1488.0 253.0 L1493.0 254.0 L1497.0 257.0 L1501.0 257.0 L1506.0 259.0 L1511.0 260.0 L1516.0 260.0 L1521.0 259.0 L1525.0 256.0 L1530.0 258.0 L1534.0 261.0 L1538.0 263.0 L1537.0 267.0 L1538.0 271.0 L1540.0 275.0 L1540.0 279.0 L1539.0 283.0 L1539.0 287.0 L1544.0 287.0 L1548.0 288.0 L1553.0 289.0 L1557.0 291.0 L1556.0 295.0 L1556.0 299.0 L1556.0 303.0 L1559.0 307.0 L1557.0 312.0 L1558.0 316.0 L1558.0 320.0 L1563.0 322.0 L1565.0 326.0 L1570.0 327.0 L1568.0 331.0 L1569.0 336.0 L1567.0 340.0 L1568.0 344.0 L1568.0 348.0 L1566.0 352.0 L1566.0 356.0 L1566.0 361.0 L1565.0 365.0 L1561.0 368.0 L1558.0 372.0 L1555.0 375.0 L1552.0 379.0 L1548.0 382.0 L1552.0 383.0 L1556.0 385.0 L1560.0 388.0 L1564.0 390.0 L1569.0 390.0 L1573.0 393.0 L1577.0 394.0 L1582.0 394.0 L1586.0 396.0 L1590.0 398.0 L1593.0 400.0 L1597.0 402.0 L1601.0 405.0 L1604.0 410.0 L1604.0 416.0 L1607.0 420.0 L1610.0 423.0 L1614.0 425.0 L1617.0 429.0 L1623.0 430.0 L1627.0 434.0 L1631.0 434.0 L1635.0 434.0 L1639.0 436.0 L1643.0 435.0 L1647.0 435.0 L1651.0 436.0 L1655.0 437.0 L1659.0 437.0 L1664.0 437.0 L1667.0 439.0 L1671.0 441.0 L1674.0 444.0 L1674.0 449.0 L1672.0 453.0 L1672.0 457.0 L1670.0 461.0 L1669.0 466.0 L1671.0 470.0 L1671.0 474.0 L1670.0 478.0 L1671.0 482.0 L1670.0 486.0 L1670.0 491.0 L1668.0 495.0 L1668.0 499.0 L1671.0 503.0 L1672.0 507.0 L1675.0 511.0 L1678.0 514.0 L1679.0 519.0 L1683.0 521.0 L1684.0 525.0 L1685.0 529.0 L1688.0 532.0 L1691.0 536.0 L1693.0 539.0 L1694.0 543.0 L1698.0 546.0 L1699.0 550.0 L1703.0 553.0 L1705.0 557.0 L1708.0 560.0 L1710.0 564.0 L1715.0 560.0 L1720.0 559.0 L1724.0 559.0 L1728.0 560.0 L1733.0 562.0 L1737.0 566.0 L1740.0 569.0 L1744.0 572.0 L1747.0 575.0 L1749.0 579.0 L1753.0 582.0 L1756.0 585.0 L1752.0 588.0 L1749.0 592.0 L1746.0 594.0 L1744.0 598.0 L1744.0 603.0 L1742.0 606.0 L1740.0 610.0 L1737.0 614.0 L1733.0 615.0 L1731.0 619.0 L1728.0 622.0 L1725.0 625.0 L1722.0 628.0 L1718.0 630.0 L1716.0 634.0 L1716.0 639.0 L1713.0 644.0 L1713.0 649.0 L1712.0 653.0 L1711.0 658.0 L1709.0 662.0 L1709.0 667.0 L1708.0 671.0 L1706.0 676.0 L1704.0 679.0 L1702.0 683.0 L1702.0 687.0 L1699.0 691.0 L1698.0 695.0 L1697.0 699.0 L1697.0 703.0 L1697.0 707.0 L1696.0 711.0 L1695.0 715.0 L1690.0 718.0 L1685.0 718.0 L1683.0 722.0 L1681.0 726.0 L1677.0 730.0 L1675.0 734.0 L1675.0 739.0 L1673.0 743.0 L1670.0 746.0 L1667.0 749.0 L1662.0 751.0 L1660.0 754.0 L1658.0 758.0 L1658.0 763.0 L1653.0 766.0 L1650.0 770.0 L1645.0 773.0 L1641.0 775.0 L1636.0 776.0 L1631.0 777.0 L1626.0 778.0 L1622.0 776.0 L1618.0 773.0 L1614.0 769.0 L1611.0 766.0 L1609.0 761.0 L1606.0 758.0 L1603.0 755.0 L1600.0 752.0 L1595.0 750.0 L1591.0 746.0 L1586.0 746.0 L1582.0 748.0 L1578.0 750.0 L1575.0 753.0 L1570.0 755.0 L1566.0 753.0 L1562.0 750.0 L1558.0 748.0 L1554.0 749.0 L1550.0 750.0 L1546.0 751.0 L1542.0 752.0 L1540.0 756.0 L1536.0 760.0 L1535.0 764.0 L1534.0 768.0 L1532.0 772.0 L1530.0 776.0 L1528.0 780.0 L1525.0 782.0 L1521.0 784.0 L1517.0 786.0 L1513.0 788.0 L1508.0 788.0 L1504.0 789.0 L1500.0 789.0 L1495.0 790.0 L1491.0 791.0 L1487.0 789.0 L1483.0 786.0 L1478.0 785.0 L1473.0 786.0 L1468.0 786.0 L1464.0 783.0 L1462.0 778.0 L1457.0 775.0 L1455.0 771.0 L1450.0 771.0 L1445.0 771.0 L1440.0 772.0 L1436.0 773.0 L1432.0 771.0 L1428.0 770.0 L1424.0 771.0 L1420.0 771.0 L1415.0 770.0 L1410.0 770.0 L1406.0 771.0 L1401.0 772.0 L1397.0 772.0 L1392.0 772.0 L1388.0 771.0 L1383.0 772.0 L1379.0 772.0 L1375.0 773.0 L1371.0 774.0 L1367.0 774.0 L1363.0 775.0 L1359.0 776.0 L1355.0 778.0 L1351.0 782.0 L1348.0 784.0 L1343.0 786.0 L1338.0 787.0 L1334.0 787.0 L1329.0 788.0 L1324.0 787.0 L1321.0 783.0 L1317.0 780.0 L1313.0 779.0 L1308.0 778.0 L1304.0 777.0 L1300.0 776.0 L1295.0 775.0 L1291.0 774.0 L1287.0 776.0 L1282.0 775.0 L1278.0 776.0 L1274.0 778.0 L1269.0 779.0 L1265.0 777.0 L1261.0 776.0 L1256.0 776.0 L1252.0 773.0 L1247.0 773.0 L1243.0 771.0 L1239.0 773.0 L1235.0 774.0 L1230.0 773.0 L1226.0 776.0 L1222.0 775.0 L1218.0 777.0 L1213.0 775.0 L1209.0 775.0 L1205.0 775.0 L1200.0 774.0 L1196.0 773.0 L1192.0 772.0 L1188.0 774.0 L1184.0 778.0 L1180.0 778.0 L1176.0 778.0 L1172.0 780.0 L1168.0 780.0 L1164.0 780.0 L1160.0 779.0 L1156.0 780.0 L1151.0 780.0 L1147.0 780.0 L1143.0 781.0 L1139.0 781.0 L1135.0 780.0 L1130.0 779.0 L1126.0 779.0 L1122.0 779.0 L1118.0 779.0 L1115.0 784.0 L1112.0 788.0 L1108.0 791.0 L1105.0 795.0 L1102.0 798.0 L1100.0 802.0 L1098.0 806.0 L1094.0 809.0 L1093.0 814.0 L1089.0 816.0 L1084.0 815.0 L1080.0 815.0 L1077.0 819.0 L1072.0 818.0 L1071.0 823.0 L1069.0 828.0 L1068.0 833.0 L1064.0 834.0 L1061.0 837.0 L1057.0 838.0 L1053.0 840.0 L1049.0 841.0 L1045.0 840.0 L1042.0 843.0 L1038.0 843.0 L1034.0 842.0 L1030.0 842.0 L1026.0 840.0 L1022.0 838.0 L1018.0 839.0 L1014.0 837.0 L1010.0 837.0 L1005.0 838.0 L1001.0 837.0 L997.0 839.0 L992.0 841.0 L988.0 844.0 L983.0 844.0 L979.0 848.0 L975.0 849.0 L971.0 851.0 L967.0 852.0 L963.0 852.0 L959.0 854.0 L954.0 855.0 L951.0 857.0 L947.0 859.0 L943.0 860.0 L939.0 862.0 L935.0 864.0 L931.0 867.0 L928.0 872.0 L928.0 877.0 L926.0 881.0 L925.0 885.0 L922.0 889.0 L920.0 894.0 L916.0 897.0 L913.0 900.0 L910.0 905.0 L908.0 909.0 L905.0 913.0 L904.0 919.0 L902.0 923.0 L902.0 928.0 L901.0 933.0 L900.0 938.0 L898.0 943.0 L898.0 948.0 L892.0 947.0 L890.0 943.0 L888.0 939.0 L887.0 935.0 L884.0 931.0 L880.0 928.0 L881.0 932.0 L881.0 937.0 L881.0 942.0 L881.0 947.0 L879.0 952.0 L878.0 958.0 L875.0 961.0 L871.0 961.0 L868.0 964.0 L864.0 966.0 L860.0 967.0 L856.0 967.0 L852.0 969.0 L848.0 968.0 L844.0 972.0 L839.0 976.0 L834.0 975.0 L829.0 977.0 L828.0 972.0 L826.0 967.0 L823.0 963.0 L818.0 961.0 L814.0 959.0 L809.0 958.0 L804.0 958.0 L800.0 956.0 L796.0 954.0 L792.0 954.0 L788.0 951.0 L784.0 950.0 L781.0 946.0 L778.0 941.0 L775.0 938.0 L773.0 934.0 L769.0 932.0 L766.0 929.0 L765.0 925.0 L761.0 923.0 L757.0 925.0 L753.0 924.0 L749.0 924.0 L744.0 923.0 L739.0 923.0 L735.0 921.0 L730.0 920.0 L729.0 916.0 L726.0 913.0 L725.0 909.0 L722.0 906.0 L721.0 902.0 L720.0 897.0 L718.0 893.0 L714.0 891.0 L709.0 889.0 L705.0 885.0 L703.0 881.0 L701.0 876.0 L701.0 871.0 L698.0 866.0 L694.0 863.0 L690.0 859.0 L688.0 855.0 L688.0 850.0 L686.0 846.0 L683.0 842.0 L682.0 838.0 L679.0 834.0 L678.0 830.0 L677.0 826.0 L674.0 822.0 L671.0 818.0 L668.0 814.0 L673.0 811.0 L678.0 809.0 L683.0 808.0 L680.0 803.0 L679.0 798.0 L675.0 797.0 L671.0 795.0 L667.0 795.0 L663.0 795.0 L659.0 793.0 L656.0 790.0 L652.0 788.0 L651.0 783.0 L650.0 779.0 L649.0 775.0 L647.0 771.0 L644.0 768.0 L642.0 764.0 L641.0 758.0 L642.0 753.0 L646.0 751.0 L648.0 747.0 L651.0 745.0 L655.0 742.0 L654.0 738.0 L653.0 734.0 L651.0 731.0 L649.0 727.0 L647.0 723.0 L646.0 719.0 L645.0 715.0 L644.0 710.0 L640.0 706.0 L638.0 701.0 L634.0 698.0 L632.0 694.0 L629.0 691.0 L624.0 689.0 L621.0 686.0 L619.0 682.0 L616.0 679.0 L613.0 676.0 L608.0 674.0 L605.0 672.0 L600.0 671.0 L597.0 667.0 L594.0 664.0 L590.0 662.0 L587.0 660.0 L583.0 657.0 L580.0 655.0 L575.0 654.0 L571.0 653.0 L568.0 650.0 L561.0 651.0 L557.0 646.0 L553.0 645.0 L550.0 642.0 L546.0 640.0 L543.0 637.0 L539.0 636.0 L535.0 635.0 L531.0 632.0 L527.0 629.0 L522.0 627.0 L518.0 624.0 L514.0 623.0 L509.0 624.0 L504.0 622.0 L500.0 622.0 L495.0 620.0 L491.0 621.0 L486.0 620.0 L482.0 621.0 L478.0 622.0 L474.0 621.0 L470.0 620.0 L466.0 620.0 L462.0 622.0 L457.0 621.0 L454.0 623.0 L449.0 623.0 L445.0 624.0 L441.0 626.0 L438.0 628.0 Z"/></clipPath>
<filter id="bl4" color-interpolation-filters="sRGB" x="-30%" y="-30%" width="160%" height="160%"><feGaussianBlur stdDeviation="4"/></filter>
<filter id="bl15" color-interpolation-filters="sRGB" x="-30%" y="-30%" width="160%" height="160%"><feGaussianBlur stdDeviation="15"/></filter>
<filter id="bl16" color-interpolation-filters="sRGB" x="-30%" y="-30%" width="160%" height="160%"><feGaussianBlur stdDeviation="16"/></filter>
<filter id="bl20" color-interpolation-filters="sRGB" x="-30%" y="-30%" width="160%" height="160%"><feGaussianBlur stdDeviation="20"/></filter>
<filter id="bl22" color-interpolation-filters="sRGB" x="-30%" y="-30%" width="160%" height="160%"><feGaussianBlur stdDeviation="22"/></filter>
<radialGradient id="g0"><stop offset="0" stop-color="#2a2a2a" stop-opacity="0.800"/><stop offset="0.2" stop-color="#2a2a2a" stop-opacity="0.736"/><stop offset="0.4" stop-color="#2a2a2a" stop-opacity="0.560"/><stop offset="0.6" stop-color="#2a2a2a" stop-opacity="0.320"/><stop offset="0.8" stop-color="#2a2a2a" stop-opacity="0.112"/><stop offset="1" stop-color="#2a2a2a" stop-opacity="0.000"/></radialGradient>
<radialGradient id="g1"><stop offset="0" stop-color="#383838" stop-opacity="0.850"/><stop offset="0.2" stop-color="#383838" stop-opacity="0.782"/><stop offset="0.4" stop-color="#383838" stop-opacity="0.595"/><stop offset="0.6" stop-color="#383838" stop-opacity="0.340"/><stop offset="0.8" stop-color="#383838" stop-opacity="0.119"/><stop offset="1" stop-color="#383838" stop-opacity="0.000"/></radialGradient>
<radialGradient id="g2"><stop offset="0" stop-color="#828282" stop-opacity="0.950"/><stop offset="0.2" stop-color="#828282" stop-opacity="0.874"/><stop offset="0.4" stop-color="#828282" stop-opacity="0.665"/><stop offset="0.6" stop-color="#828282" stop-opacity="0.380"/><stop offset="0.8" stop-color="#828282" stop-opacity="0.133"/><stop offset="1" stop-color="#828282" stop-opacity="0.000"/></radialGradient>
<radialGradient id="g3"><stop offset="0" stop-color="#8a8a8a" stop-opacity="0.800"/><stop offset="0.2" stop-color="#8a8a8a" stop-opacity="0.736"/><stop offset="0.4" stop-color="#8a8a8a" stop-opacity="0.560"/><stop offset="0.6" stop-color="#8a8a8a" stop-opacity="0.320"/><stop offset="0.8" stop-color="#8a8a8a" stop-opacity="0.112"/><stop offset="1" stop-color="#8a8a8a" stop-opacity="0.000"/></radialGradient>
<radialGradient id="g4"><stop offset="0" stop-color="#626262" stop-opacity="0.600"/><stop offset="0.2" stop-color="#626262" stop-opacity="0.552"/><stop offset="0.4" stop-color="#626262" stop-opacity="0.420"/><stop offset="0.6" stop-color="#626262" stop-opacity="0.240"/><stop offset="0.8" stop-color="#626262" stop-opacity="0.084"/><stop offset="1" stop-color="#626262" stop-opacity="0.000"/></radialGradient>
<radialGradient id="g5"><stop offset="0" stop-color="#585858" stop-opacity="0.850"/><stop offset="0.2" stop-color="#585858" stop-opacity="0.782"/><stop offset="0.4" stop-color="#585858" stop-opacity="0.595"/><stop offset="0.6" stop-color="#585858" stop-opacity="0.340"/><stop offset="0.8" stop-color="#585858" stop-opacity="0.119"/><stop offset="1" stop-color="#585858" stop-opacity="0.000"/></radialGradient>
<radialGradient id="g6"><stop offset="0" stop-color="#6e6e6e" stop-opacity="0.900"/><stop offset="0.2" stop-color="#6e6e6e" stop-opacity="0.828"/><stop offset="0.4" stop-color="#6e6e6e" stop-opacity="0.630"/><stop offset="0.6" stop-color="#6e6e6e" stop-opacity="0.360"/><stop offset="0.8" stop-color="#6e6e6e" stop-opacity="0.126"/><stop offset="1" stop-color="#6e6e6e" stop-opacity="0.000"/></radialGradient>
<radialGradient id="g7"><stop offset="0" stop-color="#6c6c6c" stop-opacity="0.900"/><stop offset="0.2" stop-color="#6c6c6c" stop-opacity="0.828"/><stop offset="0.4" stop-color="#6c6c6c" stop-opacity="0.630"/><stop offset="0.6" stop-color="#6c6c6c" stop-opacity="0.360"/><stop offset="0.8" stop-color="#6c6c6c" stop-opacity="0.126"/><stop offset="1" stop-color="#6c6c6c" stop-opacity="0.000"/></radialGradient>
<radialGradient id="g8"><stop offset="0" stop-color="#666666" stop-opacity="0.700"/><stop offset="0.2" stop-color="#666666" stop-opacity="0.644"/><stop offset="0.4" stop-color="#666666" stop-opacity="0.490"/><stop offset="0.6" stop-color="#666666" stop-opacity="0.280"/><stop offset="0.8" stop-color="#666666" stop-opacity="0.098"/><stop offset="1" stop-color="#666666" stop-opacity="0.000"/></radialGradient>
<radialGradient id="g9"><stop offset="0" stop-color="#8e8e8e" stop-opacity="0.800"/><stop offset="0.2" stop-color="#8e8e8e" stop-opacity="0.736"/><stop offset="0.4" stop-color="#8e8e8e" stop-opacity="0.560"/><stop offset="0.6" stop-color="#8e8e8e" stop-opacity="0.320"/><stop offset="0.8" stop-color="#8e8e8e" stop-opacity="0.112"/><stop offset="1" stop-color="#8e8e8e" stop-opacity="0.000"/></radialGradient>
<radialGradient id="g10"><stop offset="0" stop-color="#666666" stop-opacity="0.800"/><stop offset="0.2" stop-color="#666666" stop-opacity="0.736"/><stop offset="0.4" stop-color="#666666" stop-opacity="0.560"/><stop offset="0.6" stop-color="#666666" stop-opacity="0.320"/><stop offset="0.8" stop-color="#666666" stop-opacity="0.112"/><stop offset="1" stop-color="#666666" stop-opacity="0.000"/></radialGradient>
<radialGradient id="g11"><stop offset="0" stop-color="#585858" stop-opacity="0.500"/><stop offset="0.2" stop-color="#585858" stop-opacity="0.460"/><stop offset="0.4" stop-color="#585858" stop-opacity="0.350"/><stop offset="0.6" stop-color="#585858" stop-opacity="0.200"/><stop offset="0.8" stop-color="#585858" stop-opacity="0.070"/><stop offset="1" stop-color="#585858" stop-opacity="0.000"/></radialGradient>
<radialGradient id="g12"><stop offset="0" stop-color="#484848" stop-opacity="0.600"/><stop offset="0.2" stop-color="#484848" stop-opacity="0.552"/><stop offset="0.4" stop-color="#484848" stop-opacity="0.420"/><stop offset="0.6" stop-color="#484848" stop-opacity="0.240"/><stop offset="0.8" stop-color="#484848" stop-opacity="0.084"/><stop offset="1" stop-color="#484848" stop-opacity="0.000"/></radialGradient>
<radialGradient id="g13"><stop offset="0" stop-color="#1f1f1f" stop-opacity="0.950"/><stop offset="0.2" stop-color="#1f1f1f" stop-opacity="0.874"/><stop offset="0.4" stop-color="#1f1f1f" stop-opacity="0.665"/><stop offset="0.6" stop-color="#1f1f1f" stop-opacity="0.380"/><stop offset="0.8" stop-color="#1f1f1f" stop-opacity="0.133"/><stop offset="1" stop-color="#1f1f1f" stop-opacity="0.000"/></radialGradient>
<radialGradient id="g14"><stop offset="0" stop-color="#222222" stop-opacity="0.800"/><stop offset="0.2" stop-color="#222222" stop-opacity="0.736"/><stop offset="0.4" stop-color="#222222" stop-opacity="0.560"/><stop offset="0.6" stop-color="#222222" stop-opacity="0.320"/><stop offset="0.8" stop-color="#222222" stop-opacity="0.112"/><stop offset="1" stop-color="#222222" stop-opacity="0.000"/></radialGradient>
<radialGradient id="g15"><stop offset="0" stop-color="#4a4a4a" stop-opacity="0.800"/><stop offset="0.2" stop-color="#4a4a4a" stop-opacity="0.736"/><stop offset="0.4" stop-color="#4a4a4a" stop-opacity="0.560"/><stop offset="0.6" stop-color="#4a4a4a" stop-opacity="0.320"/><stop offset="0.8" stop-color="#4a4a4a" stop-opacity="0.112"/><stop offset="1" stop-color="#4a4a4a" stop-opacity="0.000"/></radialGradient>
<radialGradient id="g16"><stop offset="0" stop-color="#505050" stop-opacity="0.800"/><stop offset="0.2" stop-color="#505050" stop-opacity="0.736"/><stop offset="0.4" stop-color="#505050" stop-opacity="0.560"/><stop offset="0.6" stop-color="#505050" stop-opacity="0.320"/><stop offset="0.8" stop-color="#505050" stop-opacity="0.112"/><stop offset="1" stop-color="#505050" stop-opacity="0.000"/></radialGradient>
<radialGradient id="g17"><stop offset="0" stop-color="#484848" stop-opacity="0.800"/><stop offset="0.2" stop-color="#484848" stop-opacity="0.736"/><stop offset="0.4" stop-color="#484848" stop-opacity="0.560"/><stop offset="0.6" stop-color="#484848" stop-opacity="0.320"/><stop offset="0.8" stop-color="#484848" stop-opacity="0.112"/><stop offset="1" stop-color="#484848" stop-opacity="0.000"/></radialGradient>
<radialGradient id="g18"><stop offset="0" stop-color="#505050" stop-opacity="0.600"/><stop offset="0.2" stop-color="#505050" stop-opacity="0.552"/><stop offset="0.4" stop-color="#505050" stop-opacity="0.420"/><stop offset="0.6" stop-color="#505050" stop-opacity="0.240"/><stop offset="0.8" stop-color="#505050" stop-opacity="0.084"/><stop offset="1" stop-color="#505050" stop-opacity="0.000"/></radialGradient>
<radialGradient id="g19"><stop offset="0" stop-color="#606060" stop-opacity="0.900"/><stop offset="0.2" stop-color="#606060" stop-opacity="0.828"/><stop offset="0.4" stop-color="#606060" stop-opacity="0.630"/><stop offset="0.6" stop-color="#606060" stop-opacity="0.360"/><stop offset="0.8" stop-color="#606060" stop-opacity="0.126"/><stop offset="1" stop-color="#606060" stop-opacity="0.000"/></radialGradient>
<radialGradient id="g20"><stop offset="0" stop-color="#6a6a6a" stop-opacity="0.800"/><stop offset="0.2" stop-color="#6a6a6a" stop-opacity="0.736"/><stop offset="0.4" stop-color="#6a6a6a" stop-opacity="0.560"/><stop offset="0.6" stop-color="#6a6a6a" stop-opacity="0.320"/><stop offset="0.8" stop-color="#6a6a6a" stop-opacity="0.112"/><stop offset="1" stop-color="#6a6a6a" stop-opacity="0.000"/></radialGradient>
<radialGradient id="g21"><stop offset="0" stop-color="#5a5a5a" stop-opacity="0.800"/><stop offset="0.2" stop-color="#5a5a5a" stop-opacity="0.736"/><stop offset="0.4" stop-color="#5a5a5a" stop-opacity="0.560"/><stop offset="0.6" stop-color="#5a5a5a" stop-opacity="0.320"/><stop offset="0.8" stop-color="#5a5a5a" stop-opacity="0.112"/><stop offset="1" stop-color="#5a5a5a" stop-opacity="0.000"/></radialGradient>
<radialGradient id="g22"><stop offset="0" stop-color="#0e0e0e" stop-opacity="0.800"/><stop offset="0.2" stop-color="#0e0e0e" stop-opacity="0.736"/><stop offset="0.4" stop-color="#0e0e0e" stop-opacity="0.560"/><stop offset="0.6" stop-color="#0e0e0e" stop-opacity="0.320"/><stop offset="0.8" stop-color="#0e0e0e" stop-opacity="0.112"/><stop offset="1" stop-color="#0e0e0e" stop-opacity="0.000"/></radialGradient>
<radialGradient id="g23"><stop offset="0" stop-color="#000000" stop-opacity="1.000"/><stop offset="0.2" stop-color="#000000" stop-opacity="0.920"/><stop offset="0.4" stop-color="#000000" stop-opacity="0.700"/><stop offset="0.6" stop-color="#000000" stop-opacity="0.400"/><stop offset="0.8" stop-color="#000000" stop-opacity="0.140"/><stop offset="1" stop-color="#000000" stop-opacity="0.000"/></radialGradient>
<radialGradient id="g24"><stop offset="0" stop-color="#848484" stop-opacity="0.850"/><stop offset="0.2" stop-color="#848484" stop-opacity="0.782"/><stop offset="0.4" stop-color="#848484" stop-opacity="0.595"/><stop offset="0.6" stop-color="#848484" stop-opacity="0.340"/><stop offset="0.8" stop-color="#848484" stop-opacity="0.119"/><stop offset="1" stop-color="#848484" stop-opacity="0.000"/></radialGradient>
<radialGradient id="g25"><stop offset="0" stop-color="#080808" stop-opacity="0.950"/><stop offset="0.2" stop-color="#080808" stop-opacity="0.874"/><stop offset="0.4" stop-color="#080808" stop-opacity="0.665"/><stop offset="0.6" stop-color="#080808" stop-opacity="0.380"/><stop offset="0.8" stop-color="#080808" stop-opacity="0.133"/><stop offset="1" stop-color="#080808" stop-opacity="0.000"/></radialGradient>
<radialGradient id="g26"><stop offset="0" stop-color="#2a2a2a" stop-opacity="0.700"/><stop offset="0.2" stop-color="#2a2a2a" stop-opacity="0.644"/><stop offset="0.4" stop-color="#2a2a2a" stop-opacity="0.490"/><stop offset="0.6" stop-color="#2a2a2a" stop-opacity="0.280"/><stop offset="0.8" stop-color="#2a2a2a" stop-opacity="0.098"/><stop offset="1" stop-color="#2a2a2a" stop-opacity="0.000"/></radialGradient>
<radialGradient id="g27"><stop offset="0" stop-color="#303030" stop-opacity="0.500"/><stop offset="0.2" stop-color="#303030" stop-opacity="0.460"/><stop offset="0.4" stop-color="#303030" stop-opacity="0.350"/><stop offset="0.6" stop-color="#303030" stop-opacity="0.200"/><stop offset="0.8" stop-color="#303030" stop-opacity="0.070"/><stop offset="1" stop-color="#303030" stop-opacity="0.000"/></radialGradient>
<radialGradient id="g28"><stop offset="0" stop-color="#1a1a1a" stop-opacity="0.950"/><stop offset="0.2" stop-color="#1a1a1a" stop-opacity="0.874"/><stop offset="0.4" stop-color="#1a1a1a" stop-opacity="0.665"/><stop offset="0.6" stop-color="#1a1a1a" stop-opacity="0.380"/><stop offset="0.8" stop-color="#1a1a1a" stop-opacity="0.133"/><stop offset="1" stop-color="#1a1a1a" stop-opacity="0.000"/></radialGradient>
<radialGradient id="g29"><stop offset="0" stop-color="#1b1b1b" stop-opacity="0.900"/><stop offset="0.2" stop-color="#1b1b1b" stop-opacity="0.828"/><stop offset="0.4" stop-color="#1b1b1b" stop-opacity="0.630"/><stop offset="0.6" stop-color="#1b1b1b" stop-opacity="0.360"/><stop offset="0.8" stop-color="#1b1b1b" stop-opacity="0.126"/><stop offset="1" stop-color="#1b1b1b" stop-opacity="0.000"/></radialGradient>
<radialGradient id="g30"><stop offset="0" stop-color="#171717" stop-opacity="0.700"/><stop offset="0.2" stop-color="#171717" stop-opacity="0.644"/><stop offset="0.4" stop-color="#171717" stop-opacity="0.490"/><stop offset="0.6" stop-color="#171717" stop-opacity="0.280"/><stop offset="0.8" stop-color="#171717" stop-opacity="0.098"/><stop offset="1" stop-color="#171717" stop-opacity="0.000"/></radialGradient>
<radialGradient id="g31"><stop offset="0" stop-color="#3e3e3e" stop-opacity="0.850"/><stop offset="0.2" stop-color="#3e3e3e" stop-opacity="0.782"/><stop offset="0.4" stop-color="#3e3e3e" stop-opacity="0.595"/><stop offset="0.6" stop-color="#3e3e3e" stop-opacity="0.340"/><stop offset="0.8" stop-color="#3e3e3e" stop-opacity="0.119"/><stop offset="1" stop-color="#3e3e3e" stop-opacity="0.000"/></radialGradient>
<radialGradient id="g32"><stop offset="0" stop-color="#3c3c3c" stop-opacity="0.800"/><stop offset="0.2" stop-color="#3c3c3c" stop-opacity="0.736"/><stop offset="0.4" stop-color="#3c3c3c" stop-opacity="0.560"/><stop offset="0.6" stop-color="#3c3c3c" stop-opacity="0.320"/><stop offset="0.8" stop-color="#3c3c3c" stop-opacity="0.112"/><stop offset="1" stop-color="#3c3c3c" stop-opacity="0.000"/></radialGradient>
<radialGradient id="g33"><stop offset="0" stop-color="#343434" stop-opacity="0.800"/><stop offset="0.2" stop-color="#343434" stop-opacity="0.736"/><stop offset="0.4" stop-color="#343434" stop-opacity="0.560"/><stop offset="0.6" stop-color="#343434" stop-opacity="0.320"/><stop offset="0.8" stop-color="#343434" stop-opacity="0.112"/><stop offset="1" stop-color="#343434" stop-opacity="0.000"/></radialGradient>
<radialGradient id="g34"><stop offset="0" stop-color="#323232" stop-opacity="0.850"/><stop offset="0.2" stop-color="#323232" stop-opacity="0.782"/><stop offset="0.4" stop-color="#323232" stop-opacity="0.595"/><stop offset="0.6" stop-color="#323232" stop-opacity="0.340"/><stop offset="0.8" stop-color="#323232" stop-opacity="0.119"/><stop offset="1" stop-color="#323232" stop-opacity="0.000"/></radialGradient>
<radialGradient id="g35"><stop offset="0" stop-color="#3a3a3a" stop-opacity="0.850"/><stop offset="0.2" stop-color="#3a3a3a" stop-opacity="0.782"/><stop offset="0.4" stop-color="#3a3a3a" stop-opacity="0.595"/><stop offset="0.6" stop-color="#3a3a3a" stop-opacity="0.340"/><stop offset="0.8" stop-color="#3a3a3a" stop-opacity="0.119"/><stop offset="1" stop-color="#3a3a3a" stop-opacity="0.000"/></radialGradient>
<radialGradient id="g36"><stop offset="0" stop-color="#4c4c4c" stop-opacity="0.900"/><stop offset="0.2" stop-color="#4c4c4c" stop-opacity="0.828"/><stop offset="0.4" stop-color="#4c4c4c" stop-opacity="0.630"/><stop offset="0.6" stop-color="#4c4c4c" stop-opacity="0.360"/><stop offset="0.8" stop-color="#4c4c4c" stop-opacity="0.126"/><stop offset="1" stop-color="#4c4c4c" stop-opacity="0.000"/></radialGradient>
<radialGradient id="g37"><stop offset="0" stop-color="#323232" stop-opacity="0.700"/><stop offset="0.2" stop-color="#323232" stop-opacity="0.644"/><stop offset="0.4" stop-color="#323232" stop-opacity="0.490"/><stop offset="0.6" stop-color="#323232" stop-opacity="0.280"/><stop offset="0.8" stop-color="#323232" stop-opacity="0.098"/><stop offset="1" stop-color="#323232" stop-opacity="0.000"/></radialGradient>
<radialGradient id="g38"><stop offset="0" stop-color="#0c0c0c" stop-opacity="0.900"/><stop offset="0.2" stop-color="#0c0c0c" stop-opacity="0.828"/><stop offset="0.4" stop-color="#0c0c0c" stop-opacity="0.630"/><stop offset="0.6" stop-color="#0c0c0c" stop-opacity="0.360"/><stop offset="0.8" stop-color="#0c0c0c" stop-opacity="0.126"/><stop offset="1" stop-color="#0c0c0c" stop-opacity="0.000"/></radialGradient>
<radialGradient id="g39"><stop offset="0" stop-color="#060606" stop-opacity="0.950"/><stop offset="0.2" stop-color="#060606" stop-opacity="0.874"/><stop offset="0.4" stop-color="#060606" stop-opacity="0.665"/><stop offset="0.6" stop-color="#060606" stop-opacity="0.380"/><stop offset="0.8" stop-color="#060606" stop-opacity="0.133"/><stop offset="1" stop-color="#060606" stop-opacity="0.000"/></radialGradient>
<radialGradient id="g40"><stop offset="0" stop-color="#080808" stop-opacity="0.800"/><stop offset="0.2" stop-color="#080808" stop-opacity="0.736"/><stop offset="0.4" stop-color="#080808" stop-opacity="0.560"/><stop offset="0.6" stop-color="#080808" stop-opacity="0.320"/><stop offset="0.8" stop-color="#080808" stop-opacity="0.112"/><stop offset="1" stop-color="#080808" stop-opacity="0.000"/></radialGradient>
<radialGradient id="g41"><stop offset="0" stop-color="#2e2e2e" stop-opacity="0.850"/><stop offset="0.2" stop-color="#2e2e2e" stop-opacity="0.782"/><stop offset="0.4" stop-color="#2e2e2e" stop-opacity="0.595"/><stop offset="0.6" stop-color="#2e2e2e" stop-opacity="0.340"/><stop offset="0.8" stop-color="#2e2e2e" stop-opacity="0.119"/><stop offset="1" stop-color="#2e2e2e" stop-opacity="0.000"/></radialGradient>
<radialGradient id="g42"><stop offset="0" stop-color="#222222" stop-opacity="0.700"/><stop offset="0.2" stop-color="#222222" stop-opacity="0.644"/><stop offset="0.4" stop-color="#222222" stop-opacity="0.490"/><stop offset="0.6" stop-color="#222222" stop-opacity="0.280"/><stop offset="0.8" stop-color="#222222" stop-opacity="0.098"/><stop offset="1" stop-color="#222222" stop-opacity="0.000"/></radialGradient>
<radialGradient id="g43"><stop offset="0" stop-color="#3a3a3a" stop-opacity="0.700"/><stop offset="0.2" stop-color="#3a3a3a" stop-opacity="0.644"/><stop offset="0.4" stop-color="#3a3a3a" stop-opacity="0.490"/><stop offset="0.6" stop-color="#3a3a3a" stop-opacity="0.280"/><stop offset="0.8" stop-color="#3a3a3a" stop-opacity="0.098"/><stop offset="1" stop-color="#3a3a3a" stop-opacity="0.000"/></radialGradient>
<radialGradient id="g44"><stop offset="0" stop-color="#5a5a5a" stop-opacity="0.850"/><stop offset="0.2" stop-color="#5a5a5a" stop-opacity="0.782"/><stop offset="0.4" stop-color="#5a5a5a" stop-opacity="0.595"/><stop offset="0.6" stop-color="#5a5a5a" stop-opacity="0.340"/><stop offset="0.8" stop-color="#5a5a5a" stop-opacity="0.119"/><stop offset="1" stop-color="#5a5a5a" stop-opacity="0.000"/></radialGradient>
<radialGradient id="g45"><stop offset="0" stop-color="#a4a4a4" stop-opacity="0.900"/><stop offset="0.2" stop-color="#a4a4a4" stop-opacity="0.828"/><stop offset="0.4" stop-color="#a4a4a4" stop-opacity="0.630"/><stop offset="0.6" stop-color="#a4a4a4" stop-opacity="0.360"/><stop offset="0.8" stop-color="#a4a4a4" stop-opacity="0.126"/><stop offset="1" stop-color="#a4a4a4" stop-opacity="0.000"/></radialGradient>
<radialGradient id="g46"><stop offset="0" stop-color="#a0a0a0" stop-opacity="0.950"/><stop offset="0.2" stop-color="#a0a0a0" stop-opacity="0.874"/><stop offset="0.4" stop-color="#a0a0a0" stop-opacity="0.665"/><stop offset="0.6" stop-color="#a0a0a0" stop-opacity="0.380"/><stop offset="0.8" stop-color="#a0a0a0" stop-opacity="0.133"/><stop offset="1" stop-color="#a0a0a0" stop-opacity="0.000"/></radialGradient>
<radialGradient id="g47"><stop offset="0" stop-color="#ffffff" stop-opacity="1.000"/><stop offset="0.2" stop-color="#ffffff" stop-opacity="0.920"/><stop offset="0.4" stop-color="#ffffff" stop-opacity="0.700"/><stop offset="0.6" stop-color="#ffffff" stop-opacity="0.400"/><stop offset="0.8" stop-color="#ffffff" stop-opacity="0.140"/><stop offset="1" stop-color="#ffffff" stop-opacity="0.000"/></radialGradient>
<radialGradient id="g48"><stop offset="0" stop-color="#181818" stop-opacity="0.850"/><stop offset="0.2" stop-color="#181818" stop-opacity="0.782"/><stop offset="0.4" stop-color="#181818" stop-opacity="0.595"/><stop offset="0.6" stop-color="#181818" stop-opacity="0.340"/><stop offset="0.8" stop-color="#181818" stop-opacity="0.119"/><stop offset="1" stop-color="#181818" stop-opacity="0.000"/></radialGradient>
<radialGradient id="g49"><stop offset="0" stop-color="#181818" stop-opacity="0.800"/><stop offset="0.2" stop-color="#181818" stop-opacity="0.736"/><stop offset="0.4" stop-color="#181818" stop-opacity="0.560"/><stop offset="0.6" stop-color="#181818" stop-opacity="0.320"/><stop offset="0.8" stop-color="#181818" stop-opacity="0.112"/><stop offset="1" stop-color="#181818" stop-opacity="0.000"/></radialGradient>
<radialGradient id="g50"><stop offset="0" stop-color="#2c2c2c" stop-opacity="0.700"/><stop offset="0.2" stop-color="#2c2c2c" stop-opacity="0.644"/><stop offset="0.4" stop-color="#2c2c2c" stop-opacity="0.490"/><stop offset="0.6" stop-color="#2c2c2c" stop-opacity="0.280"/><stop offset="0.8" stop-color="#2c2c2c" stop-opacity="0.098"/><stop offset="1" stop-color="#2c2c2c" stop-opacity="0.000"/></radialGradient>
<radialGradient id="g51"><stop offset="0" stop-color="#0c0c0c" stop-opacity="0.850"/><stop offset="0.2" stop-color="#0c0c0c" stop-opacity="0.782"/><stop offset="0.4" stop-color="#0c0c0c" stop-opacity="0.595"/><stop offset="0.6" stop-color="#0c0c0c" stop-opacity="0.340"/><stop offset="0.8" stop-color="#0c0c0c" stop-opacity="0.119"/><stop offset="1" stop-color="#0c0c0c" stop-opacity="0.000"/></radialGradient>
<radialGradient id="g52"><stop offset="0" stop-color="#0a0a0a" stop-opacity="0.900"/><stop offset="0.2" stop-color="#0a0a0a" stop-opacity="0.828"/><stop offset="0.4" stop-color="#0a0a0a" stop-opacity="0.630"/><stop offset="0.6" stop-color="#0a0a0a" stop-opacity="0.360"/><stop offset="0.8" stop-color="#0a0a0a" stop-opacity="0.126"/><stop offset="1" stop-color="#0a0a0a" stop-opacity="0.000"/></radialGradient>
<radialGradient id="g53"><stop offset="0" stop-color="#2e2e2e" stop-opacity="0.700"/><stop offset="0.2" stop-color="#2e2e2e" stop-opacity="0.644"/><stop offset="0.4" stop-color="#2e2e2e" stop-opacity="0.490"/><stop offset="0.6" stop-color="#2e2e2e" stop-opacity="0.280"/><stop offset="0.8" stop-color="#2e2e2e" stop-opacity="0.098"/><stop offset="1" stop-color="#2e2e2e" stop-opacity="0.000"/></radialGradient>
</defs>
<g clip-path="url(#land)">
<rect x="380" y="180" width="1400" height="820" fill="#1f1f1f"/>
<path d="M380.0 300.0 L800.0 300.0 L835.0 352.0 L869.0 360.0 L939.0 329.0 L985.0 322.0 L1078.0 332.0 L1125.0 313.0 L1185.0 290.0 L1190.0 400.0 L1106.0 408.0 L1078.0 425.0 L1032.0 447.0 L985.0 464.0 L939.0 482.0 L892.0 491.0 L799.0 484.0 L752.0 500.0 L678.0 517.0 L613.0 526.0 L543.0 540.0 L487.0 550.0 L445.0 552.0 L425.0 540.0 L380.0 520.0 Z" fill="#525252" fill-opacity="1" filter="url(#bl15)"/>
<path d="M1090.0 250.0 L1620.0 250.0 L1620.0 415.0 L1560.0 455.0 L1400.0 482.0 L1250.0 472.0 L1140.0 470.0 L1090.0 440.0 Z" fill="#3a3a3a" fill-opacity="1" filter="url(#bl16)"/>
<path d="M415.0 545.0 L540.0 530.0 L650.0 515.0 L700.0 560.0 L640.0 610.0 L520.0 625.0 L430.0 618.0 Z" fill="#2d2d2d" fill-opacity="1" filter="url(#bl15)"/>
<path d="M1090.0 505.0 L1200.0 490.0 L1385.0 500.0 L1380.0 625.0 L1250.0 645.0 L1100.0 625.0 Z" fill="#303030" fill-opacity="1" filter="url(#bl20)"/>
<path d="M640.0 545.0 L800.0 560.0 L950.0 560.0 L960.0 680.0 L800.0 700.0 L660.0 650.0 Z" fill="#2c2c2c" fill-opacity="1" filter="url(#bl22)"/>
<path d="M1400.0 480.0 L1600.0 445.0 L1770.0 560.0 L1710.0 810.0 L1400.0 810.0 L1385.0 640.0 Z" fill="#131313" fill-opacity="1" filter="url(#bl22)"/>
<path d="M980.0 600.0 L1100.0 640.0 L1380.0 640.0 L1390.0 790.0 L1100.0 800.0 L1000.0 760.0 L960.0 680.0 Z" fill="#171717" fill-opacity="1" filter="url(#bl20)"/>
<path d="M830.0 727.0 L844.0 710.0 L862.0 700.0 L902.0 677.0 L942.0 682.0 L953.0 717.0 L958.0 745.0 L966.0 772.0 L970.0 803.0 L951.0 838.0 L923.0 850.0 L881.0 850.0 L845.0 840.0 L826.0 800.0 L826.0 760.0 Z" fill="#3e3e3e" fill-opacity="1" filter="url(#bl4)"/>
<ellipse cx="425" cy="520" rx="45" ry="80" fill="url(#g0)"/>
<ellipse cx="442" cy="470" rx="48" ry="85" fill="url(#g1)"/>
<ellipse cx="612" cy="440" rx="62" ry="95" fill="url(#g2)"/>
<ellipse cx="618" cy="410" rx="56" ry="62" fill="url(#g3)"/>
<ellipse cx="600" cy="400" rx="95" ry="70" fill="url(#g4)"/>
<ellipse cx="508" cy="512" rx="52" ry="42" fill="url(#g5)"/>
<ellipse cx="866" cy="424" rx="68" ry="66" fill="url(#g6)"/>
<ellipse cx="968" cy="372" rx="58" ry="46" fill="url(#g7)" transform="rotate(35 968 372)"/>
<ellipse cx="985" cy="410" rx="30" ry="40" fill="url(#g8)"/>
<ellipse cx="1003" cy="431" rx="26" ry="24" fill="url(#g9)"/>
<ellipse cx="898" cy="465" rx="42" ry="40" fill="url(#g10)"/>
<ellipse cx="730" cy="450" rx="60" ry="40" fill="url(#g11)"/>
<ellipse cx="790" cy="395" rx="40" ry="40" fill="url(#g12)"/>
<ellipse cx="950" cy="265" rx="120" ry="75" fill="url(#g13)"/>
<ellipse cx="1090" cy="290" rx="70" ry="45" fill="url(#g14)"/>
<ellipse cx="1380" cy="328" rx="50" ry="42" fill="url(#g15)"/>
<ellipse cx="1162" cy="423" rx="36" ry="46" fill="url(#g16)"/>
<ellipse cx="1273" cy="425" rx="22" ry="20" fill="url(#g17)"/>
<ellipse cx="1485" cy="392" rx="105" ry="55" fill="url(#g18)" transform="rotate(-25 1485 392)"/>
<ellipse cx="1455" cy="418" rx="72" ry="56" fill="url(#g19)"/>
<ellipse cx="1468" cy="401" rx="40" ry="30" fill="url(#g20)"/>
<ellipse cx="1535" cy="368" rx="30" ry="30" fill="url(#g21)"/>
<ellipse cx="1260" cy="375" rx="28" ry="42" fill="url(#g22)"/>
<ellipse cx="1260" cy="383" rx="24" ry="28" fill="url(#g23)"/>
<ellipse cx="1331" cy="386" rx="13" ry="22" fill="url(#g24)"/>
<ellipse cx="1335" cy="411" rx="10" ry="9" fill="url(#g25)"/>
<ellipse cx="1460" cy="325" rx="25" ry="22" fill="url(#g26)"/>
<ellipse cx="1220" cy="335" rx="60" ry="35" fill="url(#g27)"/>
<ellipse cx="820" cy="522" rx="95" ry="36" fill="url(#g28)"/>
<ellipse cx="530" cy="582" rx="58" ry="40" fill="url(#g29)"/>
<ellipse cx="1075" cy="585" rx="60" ry="60" fill="url(#g30)"/>
<ellipse cx="1166" cy="572" rx="42" ry="46" fill="url(#g31)"/>
<ellipse cx="1236" cy="550" rx="40" ry="38" fill="url(#g32)"/>
<ellipse cx="1321" cy="580" rx="36" ry="40" fill="url(#g33)"/>
<ellipse cx="1369" cy="705" rx="24" ry="34" fill="url(#g34)"/>
<ellipse cx="1218" cy="734" rx="26" ry="24" fill="url(#g35)"/>
<ellipse cx="1295" cy="749" rx="12" ry="12" fill="url(#g36)"/>
<ellipse cx="1260" cy="745" rx="30" ry="22" fill="url(#g37)"/>
<ellipse cx="1424" cy="512" rx="70" ry="45" fill="url(#g38)"/>
<ellipse cx="1442" cy="609" rx="60" ry="36" fill="url(#g39)"/>
<ellipse cx="1200" cy="790" rx="40" ry="14" fill="url(#g40)"/>
<ellipse cx="1608" cy="635" rx="28" ry="32" fill="url(#g41)"/>
<ellipse cx="1470" cy="690" rx="28" ry="22" fill="url(#g42)"/>
<ellipse cx="885" cy="668" rx="38" ry="26" fill="url(#g43)"/>
<ellipse cx="850" cy="770" rx="40" ry="60" fill="url(#g18)"/>
<ellipse cx="912" cy="806" rx="58" ry="48" fill="url(#g44)"/>
<ellipse cx="900" cy="788" rx="42" ry="28" fill="url(#g45)"/>
<ellipse cx="894" cy="751" rx="52" ry="50" fill="url(#g46)"/>
<ellipse cx="894" cy="750" rx="33" ry="33" fill="url(#g47)"/>
<ellipse cx="894" cy="750" rx="20" ry="20" fill="url(#g47)"/>
<ellipse cx="859" cy="763" rx="21" ry="21" fill="url(#g28)"/>
<ellipse cx="946" cy="750" rx="17" ry="18" fill="url(#g48)"/>
<ellipse cx="1030" cy="790" rx="20" ry="20" fill="url(#g49)"/>
<ellipse cx="1045" cy="812" rx="45" ry="32" fill="url(#g50)"/>
<ellipse cx="1030" cy="698" rx="50" ry="40" fill="url(#g51)"/>
<ellipse cx="1064" cy="730" rx="55" ry="48" fill="url(#g52)"/>
<ellipse cx="840" cy="860" rx="45" ry="40" fill="url(#g53)"/>
</g>
<path d="M1616.0 434.0 L1623.3 439.2 L1629.7 437.8 L1636.2 436.6 L1640.7 440.4 L1645.4 444.0 L1651.8 445.6 L1658.3 445.8 L1667.6 444.0 L1669.4 451.3 L1667.6 456.9 L1665.7 462.4 L1663.9 467.9 L1664.4 473.4 L1665.6 478.9 L1665.7 484.5 L1663.8 490.9 L1662.0 497.4 L1664.3 503.0 L1666.5 508.7 L1669.4 514.0 L1673.0 518.6 L1675.8 523.7 L1678.6 528.8 L1682.1 533.2 L1684.1 538.6 L1687.2 543.3 L1691.1 547.5 L1693.4 552.7 L1696.0 557.3 L1699.3 561.5 L1702.9 565.3 L1706.3 569.3 L1711.8 564.9 L1718.2 565.1 L1724.7 564.9 L1730.6 568.5 L1735.8 573.0 L1740.7 577.0 L1744.4 582.1 L1748.7 586.6 L1744.5 590.5 L1739.4 593.3 L1738.0 598.4 L1736.1 603.2 L1733.9 608.0 L1730.8 612.2 L1726.6 615.4 L1722.9 619.2 L1719.2 622.8 L1714.2 627.0 L1710.0 632.0 L1709.0 637.1 L1707.9 642.1 L1707.2 647.2 L1706.3 652.3 L1704.6 657.8 L1703.6 663.4 L1702.4 669.0 L1700.7 674.4 L1697.6 678.9 L1695.1 683.8 L1693.4 689.1 L1691.9 694.5 L1691.2 700.1 L1690.9 705.7 L1689.7 711.2 L1680.5 713.1 L1677.8 717.7 L1674.6 721.9 L1671.2 726.0 L1670.1 732.6 L1667.6 738.9 L1663.0 742.3 L1659.1 746.4 L1654.7 750.0 L1652.8 759.2 L1646.9 763.4 L1641.8 768.4 L1636.3 769.8 L1630.6 770.2 L1625.2 772.1 L1620.9 768.0 L1616.0 764.7 L1611.7 760.6 L1608.2 755.8 L1605.4 750.5 L1601.2 746.3 L1595.6 744.1 L1590.4 741.1 L1584.6 739.6 L1579.8 742.6 L1575.1 745.9 L1569.9 748.1 L1564.5 744.8 L1558.8 741.8 L1552.6 742.9 L1546.6 745.2 L1540.4 746.3 L1537.2 751.3 L1533.0 755.5 L1531.4 761.1 L1528.6 766.3 L1527.5 772.1 L1521.7 776.4 L1516.4 781.3 L1510.5 783.0 L1504.5 783.9 L1498.5 785.2 L1492.4 785.7 L1485.6 783.2 L1479.5 779.4 L1470.3 781.3 L1467.0 777.5 L1462.6 774.7 L1459.3 770.7 L1455.6 767.3 L1448.2 767.9 L1440.8 768.4 L1435.2 768.3 L1429.8 766.8 L1424.1 767.1 L1418.7 765.7 L1413.1 765.9 L1407.6 764.7 L1405.8 755.5 L1410.2 752.8 L1414.4 749.9 L1418.9 747.4 L1423.9 745.8 L1427.9 742.6 L1429.8 733.4 L1427.1 729.0 L1423.4 725.5 L1420.6 721.2 L1426.5 716.7 L1431.6 711.2 L1435.9 707.2 L1440.8 703.9 L1440.8 696.5 L1438.2 691.0 L1436.5 685.2 L1433.5 679.9 L1432.9 674.3 L1431.1 668.9 L1430.9 663.3 L1437.1 668.8 L1442.8 668.7 L1448.2 667.0 L1449.6 661.9 L1451.5 657.1 L1453.7 652.3 L1458.6 648.0 L1462.9 643.0 L1464.5 636.8 L1466.3 630.6 L1468.5 624.6 L1470.7 619.6 L1474.0 615.4 L1480.7 617.5 L1486.9 620.9 L1489.5 625.6 L1492.4 630.1 L1501.7 629.4 L1508.3 630.9 L1514.6 633.1 L1514.8 627.8 L1514.4 622.4 L1514.5 617.1 L1514.6 611.7 L1516.9 606.4 L1517.8 600.6 L1519.4 595.1 L1519.4 585.9 L1523.4 581.1 L1527.7 576.5 L1531.2 571.2 L1535.5 567.5 L1540.1 564.2 L1545.4 562.0 L1549.6 558.2 L1555.4 554.6 L1560.6 550.1 L1566.1 548.5 L1571.6 547.2 L1577.3 546.9 L1582.8 545.3 L1582.9 539.1 L1581.1 533.1 L1580.9 526.9 L1578.8 521.4 L1575.4 516.6 L1580.9 517.2 L1586.5 516.8 L1592.0 516.6 L1591.2 510.8 L1590.1 505.1 L1590.1 499.3 L1591.3 494.1 L1594.5 489.7 L1595.7 484.5 L1597.7 478.8 L1600.5 473.5 L1598.4 466.9 L1595.7 460.6 L1596.2 453.2 L1597.5 445.8 L1602.4 442.5 L1606.7 438.4 L1611.4 436.3 Z" fill="none" stroke="#e31a1c" stroke-width="4.2" stroke-linejoin="round"/>
</svg>
<svg class="abs" style="left:0;top:0;pointer-events:none" width="1920" height="1031" viewBox="0 0 1920 1031">
<defs>
<linearGradient id="lg" x1="0" y1="0" x2="1" y2="1"><stop offset="0" stop-color="#ffffff"/><stop offset="1" stop-color="#d6d6d6"/></linearGradient>
<linearGradient id="lgd" x1="0" y1="0" x2="1" y2="1"><stop offset="0" stop-color="#fbfbfb"/><stop offset="1" stop-color="#e6e6e6"/></linearGradient>
<linearGradient id="scr" x1="0" y1="0" x2="1" y2="0"><stop offset="0" stop-color="#f2f2f2"/><stop offset="1" stop-color="#cfcfcf"/></linearGradient>
<linearGradient id="blg" x1="0" y1="0" x2="0" y2="1"><stop offset="0" stop-color="#7fa9dc"/><stop offset="1" stop-color="#4a7fc0"/></linearGradient>
<linearGradient id="msh" x1="0" y1="0" x2="1" y2="1"><stop offset="0" stop-color="#cdd9ea"/><stop offset="1" stop-color="#8eabd2"/></linearGradient>
<radialGradient id="redball" cx="0.35" cy="0.3" r="0.8"><stop offset="0" stop-color="#d04040"/><stop offset="1" stop-color="#8a0f0f"/></radialGradient>
</defs>
<g transform="translate(1.2 4) scale(0.92)"><circle cx="11.6" cy="11" r="7.6" fill="none" stroke="#5d9a35" stroke-width="4.6"/><path d="M13 12L21.4 20.6L17.6 21.4L11.6 15Z" fill="#4e8f2c"/><path d="M12.8 11.4L16.2 18L10.2 14.2Z" fill="#f0a03c"/><path d="M9.6 9.8L13.4 11L11.4 14.2L8.8 11.6Z" fill="#ee7913"/><path d="M14 12.6L21.6 20.4" stroke="#93c05a" stroke-width="2.2"/></g>
<g transform="translate(19 61)"><path d="M4.1 1.3H15.1L20.1 6.3V22.8H4.1Z" fill="#fff" stroke="#707070" stroke-width="1.2" stroke-linejoin="round"/><path d="M15.1 1.3V6.3H20.1" fill="none" stroke="#707070" stroke-width="1.02"/></g>
<g transform="translate(51 61)"><path d="M1.9 20.6V3.4H8.6L10.4 5.6H21V9" fill="#f7d44c" stroke="#dcb63a" stroke-width="1" stroke-linejoin="round"/><path d="M1.9 20.7L4.6 8.9H24.1L21.4 20.7Z" fill="#fcdc5a" stroke="#e0ba3c" stroke-width="1" stroke-linejoin="round"/></g>
<g transform="translate(85 61)"><rect x="2.2" y="1.2" width="19.6" height="21" rx="2.2" fill="#5f8fc8" stroke="#3f72ae" stroke-width="1.1"/><rect x="5.2" y="2.2" width="14.2" height="8.6" fill="#e9e9e9" stroke="#c9c9c9" stroke-width="0.5"/><path d="M6.6 4.4H18M6.6 6.4H18M6.6 8.4H18" stroke="#555" stroke-width="0.9"/><rect x="5.8" y="14.4" width="12.6" height="6.8" fill="#dfe3e8" stroke="#35679f" stroke-width="0.8"/><rect x="7.6" y="15.6" width="2.4" height="4.4" fill="#2f5f96"/></g>
<g transform="translate(118 61)"><path d="M1.3 2.2H17.7L22.7 7.2V21.8H1.3Z" fill="#fff" stroke="#7a7a7a" stroke-width="1.2" stroke-linejoin="round"/><path d="M17.7 2.2V7.2H22.7" fill="none" stroke="#7a7a7a" stroke-width="1.02"/><rect x="8.5" y="6" width="12" height="13" fill="none" stroke="#b9c9ee" stroke-width="0.9"/><path d="M3.3 3.4H12.6V8.4H7.6V22.6H3.3Z" fill="#fbd94f" stroke="#e0b52a" stroke-width="0.9"/><path d="M3.6 10.5H6M3.6 12.8H5.2M3.6 15.1H6M3.6 17.4H5.2M3.6 19.7H6M5.2 4.5L7.2 6.5" stroke="#c99a12" stroke-width="0.8"/><rect x="13" y="13" width="11" height="11" rx="1.8" fill="#c7a30c" stroke="#d6b62a" stroke-width="0.8"/><path d="M14.54 18.50L22.46 18.50M15.70 15.70L21.30 21.30M18.50 14.54L18.50 22.46M21.30 15.70L15.70 21.30" stroke="#fff" stroke-width="1.3" fill="none"/><circle cx="18.5" cy="18.5" r="1.5" fill="#fff"/><circle cx="18.5" cy="18.5" r="0.7" fill="#c7a30c"/></g>
<g transform="translate(151 61)"><path d="M1.1 2.2H17.9L22.9 7.2V21.8H1.1Z" fill="#fff" stroke="#7a7a7a" stroke-width="1.2" stroke-linejoin="round"/><path d="M17.9 2.2V7.2H22.9" fill="none" stroke="#7a7a7a" stroke-width="1.02"/><rect x="3.4" y="4.6" width="16.4" height="14.8" fill="none" stroke="#b4c6f2" stroke-width="1"/><path d="M13.5 13L20.2 20.6" stroke="#7d6f3a" stroke-width="4.4" stroke-linecap="round"/><path d="M13.8 13.3L20 20.3" stroke="#ecd584" stroke-width="2.6" stroke-linecap="round"/><path d="M8.4 9.2C7.4 11.6 9.8 14.2 12.6 13.4L14.6 12.2C15.4 10.4 14.6 8 12.4 7.2L12.8 10L10.8 11L8.4 9.2Z" fill="#d4d4d4" stroke="#777" stroke-width="0.9" stroke-linejoin="round"/></g>
<g transform="translate(184 61)"><circle cx="6.5" cy="6.5" r="4.3" fill="#d2652e" stroke="#b64f1d" stroke-width="0.9"/><path d="M14 10L21.3 3" stroke="#4a7cba" stroke-width="2.3" stroke-linecap="round"/><rect x="2.6" y="13.3" width="8" height="8.2" fill="#8fb78f" stroke="#62a062" stroke-width="0.9"/><text x="14.2" y="21.2" font-family="Liberation Sans, sans-serif" font-size="12.5" fill="#666">a</text></g>
<g transform="translate(235 61)"><path d="M10.4 22.6L8.8 18.6L4.1 11.6C3 9.7 3.2 8.4 4.4 8C5.7 7.6 7 8.9 8.4 11.6V2C8.4 -0.1 11.3 -0.1 11.3 2V9.6V3.4C11.3 1.4 14.3 1.4 14.3 3.4V10.2V5C14.3 3 17.3 3 17.3 5V11.2V7.6C17.3 5.6 20.4 5.6 20.4 7.6V14.6C20.4 18 19.4 20 19.2 22.6Z" fill="#fff" stroke="#000" stroke-width="1.25" stroke-linejoin="round"/></g>
<g transform="translate(268 61)"><rect x="2.2" y="2.2" width="13.8" height="13.8" fill="#fce94f" stroke="#e3c21e" stroke-width="0.9"/><path d="M12 0.6L16.6 5.4H13.9V8.6H10.1V5.4H7.4Z" transform="rotate(0 12 12)" fill="#5386c4" stroke="#3b6cab" stroke-width="0.7" stroke-linejoin="round"/><path d="M12 0.6L16.6 5.4H13.9V8.6H10.1V5.4H7.4Z" transform="rotate(90 12 12)" fill="#5386c4" stroke="#3b6cab" stroke-width="0.7" stroke-linejoin="round"/><path d="M12 0.6L16.6 5.4H13.9V8.6H10.1V5.4H7.4Z" transform="rotate(180 12 12)" fill="#5386c4" stroke="#3b6cab" stroke-width="0.7" stroke-linejoin="round"/><path d="M12 0.6L16.6 5.4H13.9V8.6H10.1V5.4H7.4Z" transform="rotate(270 12 12)" fill="#5386c4" stroke="#3b6cab" stroke-width="0.7" stroke-linejoin="round"/></g>
<g transform="translate(301 61)"><path d="M8.6 15.4L1.8 22.2" stroke="#3a3a2a" stroke-width="4.2"/><path d="M7.7 16.3L2.3 21.7" stroke="#f5c211" stroke-width="2.4"/><circle cx="8.8" cy="15.2" r="1.7" fill="#111"/><circle cx="14.5" cy="9.2" r="8.2" fill="url(#lg)" stroke="#7c7c7c" stroke-width="1.2"/><path d="M9.7 9.2H19.3M14.5 4.4V14" stroke="#4a80c2" stroke-width="2.2"/></g>
<g transform="translate(334 61)"><path d="M8.6 15.4L1.8 22.2" stroke="#3a3a2a" stroke-width="4.2"/><path d="M7.7 16.3L2.3 21.7" stroke="#f5c211" stroke-width="2.4"/><circle cx="8.8" cy="15.2" r="1.7" fill="#111"/><circle cx="14.5" cy="9.2" r="8.2" fill="url(#lg)" stroke="#7c7c7c" stroke-width="1.2"/><path d="M9.7 9.2H19.3" stroke="#4a80c2" stroke-width="2.2"/></g>
<g transform="translate(367 61)"><g transform="translate(3.8 0.2) rotate(0 3.9 3.9)"><rect width="7.8" height="7.8" fill="#4f84c4"/><path d="M1.2 1.2H5.4L4 2.6L6.8 5.4L5.4 6.8L2.6 4L1.2 5.4Z" fill="#dfe9f6"/></g><g transform="translate(16.2 0.2) rotate(90 3.9 3.9)"><rect width="7.8" height="7.8" fill="#4f84c4"/><path d="M1.2 1.2H5.4L4 2.6L6.8 5.4L5.4 6.8L2.6 4L1.2 5.4Z" fill="#dfe9f6"/></g><g transform="translate(16.2 12.2) rotate(180 3.9 3.9)"><rect width="7.8" height="7.8" fill="#4f84c4"/><path d="M1.2 1.2H5.4L4 2.6L6.8 5.4L5.4 6.8L2.6 4L1.2 5.4Z" fill="#dfe9f6"/></g><path d="M8.4 15.2L1.6 22.2" stroke="#3a3a2a" stroke-width="4.2"/><path d="M7.5 16.1L2.1 21.7" stroke="#f5c211" stroke-width="2.4"/><circle cx="8.6" cy="15" r="1.7" fill="#111"/><circle cx="14.2" cy="9" r="7.3" fill="url(#lg)" stroke="#9a9a9a" stroke-width="0.9" fill-opacity="0.9"/></g>
<g transform="translate(400 61)"><rect x="2.2" y="2.2" width="9" height="12.8" fill="#e4e2da" stroke="#d6d4cc" stroke-width="0.8"/><path d="M8.4 15.6L1.2 22.6" stroke="#dcdad2" stroke-width="3.2" stroke-linecap="butt"/><circle cx="15.3" cy="8.8" r="8.3" fill="url(#lgd)" stroke="#d4d4d4" stroke-width="1.1"/><path d="M15.3 2.5V14.5" stroke="#e8e8e8" stroke-width="0.9"/></g>
<g transform="translate(433 61)"><rect x="2.2" y="2.2" width="9" height="13" fill="#f4f4f4" stroke="#8a8a8a" stroke-width="1"/><path d="M8.2 15.8L1 22.6" stroke="#3a3a2a" stroke-width="4.2"/><path d="M7.3 16.7L1.5 22.1" stroke="#f5c211" stroke-width="2.4"/><circle cx="8.4" cy="15.6" r="1.7" fill="#111"/><circle cx="15.2" cy="8.8" r="8.4" fill="url(#lg)" stroke="#7c7c7c" stroke-width="1.2"/><path d="M15.4 2.8V14.6" stroke="#cfcfcf" stroke-width="0.9"/></g>
<g transform="translate(466 61)"><rect x="2.2" y="2.2" width="9" height="13" fill="#f4f4f4" stroke="#8a8a8a" stroke-width="1"/><path d="M8.2 15.8L1 22.6" stroke="#3a3a2a" stroke-width="4.2"/><path d="M7.3 16.7L1.5 22.1" stroke="#f5c211" stroke-width="2.4"/><circle cx="8.4" cy="15.6" r="1.7" fill="#111"/><circle cx="14.8" cy="9.4" r="8" fill="url(#lg)" stroke="#7c7c7c" stroke-width="1.2"/><text x="14.8" y="13.2" text-anchor="middle" font-family="Liberation Sans, sans-serif" font-weight="bold" font-size="10.5" letter-spacing="-0.9" fill="#1a1a1a">1:1</text></g>
<g transform="translate(499 61)"><path d="M8.6 15.6L1.6 22.4" stroke="#3a3a2a" stroke-width="4.2"/><path d="M7.7 16.5L2.1 21.9" stroke="#f5c211" stroke-width="2.4"/><circle cx="8.8" cy="15.4" r="1.7" fill="#111"/><circle cx="14.5" cy="9.4" r="8.2" fill="url(#lg)" stroke="#7c7c7c" stroke-width="1.2"/><rect x="13.2" y="13" width="10.6" height="10.8" fill="#5b8ec9" stroke="#3d6fa9" stroke-width="0.9"/><path d="M21.2 15.2L16 18.4L21.2 21.6" fill="none" stroke="#fff" stroke-width="2"/></g>
<g transform="translate(532 61)"><path d="M8.6 15.6L1.6 22.4" stroke="#dcdad2" stroke-width="3.2" stroke-linecap="butt"/><circle cx="14.5" cy="9.4" r="8.2" fill="url(#lgd)" stroke="#d4d4d4" stroke-width="1.1"/><rect x="13.2" y="13" width="10.6" height="10.8" fill="#dfe1e4" stroke="#d2d4d8" stroke-width="0.9"/><path d="M15.8 15.2L21 18.4L15.8 21.6" fill="none" stroke="#f6f6f6" stroke-width="2"/></g>
<g transform="translate(565 61)"><path d="M4.4 1.2H21.8V21.8H4.4Z" fill="url(#scr)" stroke="#a8a8a8" stroke-width="1"/><path d="M2.2 2.6C2.2 0.6 6.4 0.6 6.4 2.6V19.4C4.6 19.4 2.2 20 2.2 21.8Z" fill="#ededed" stroke="#a2a2a2" stroke-width="0.9"/><path d="M2.2 21.8C2.4 19.8 5 19.4 6.4 19.4V21.8Z" fill="#d8d8d8" stroke="#a2a2a2" stroke-width="0.9"/><rect x="13" y="13" width="11" height="11" rx="1.8" fill="#c7a30c" stroke="#d6b62a" stroke-width="0.8"/><path d="M14.54 18.50L22.46 18.50M15.70 15.70L21.30 21.30M18.50 14.54L18.50 22.46M21.30 15.70L15.70 21.30" stroke="#fff" stroke-width="1.3" fill="none"/><circle cx="18.5" cy="18.5" r="1.5" fill="#fff"/><circle cx="18.5" cy="18.5" r="0.7" fill="#c7a30c"/></g>
<g transform="translate(598 61)"><path d="M0.8 15.4L8.2 4.9L21.8 4.4L22.6 15L15 18.6Z" fill="#dcdcdc" stroke="#b4b4b4" stroke-width="0.9" stroke-linejoin="round"/><path d="M4.4 10.2L22.2 9.6M2.6 12.8L12 13.6L22.4 12.4M12.6 4.7L9 17.2M17.4 4.6L16.2 17.8M8 14L4.2 16.6" fill="none" stroke="#bdbdbd" stroke-width="0.8"/><rect x="13" y="13" width="11" height="11" rx="1.8" fill="#c7a30c" stroke="#d6b62a" stroke-width="0.8"/><path d="M14.54 18.50L22.46 18.50M15.70 15.70L21.30 21.30M18.50 14.54L18.50 22.46M21.30 15.70L15.70 21.30" stroke="#fff" stroke-width="1.3" fill="none"/><circle cx="18.5" cy="18.5" r="1.5" fill="#fff"/><circle cx="18.5" cy="18.5" r="0.7" fill="#c7a30c"/></g>
<g transform="translate(631 61)"><path d="M7 1.1H17V22L13 22L7 16.6Z" fill="url(#blg)" stroke="#2e5a92" stroke-width="1.1" stroke-linejoin="round"/><path d="M8.4 2.2V16" stroke="#a9c6ea" stroke-width="1.2"/><rect x="13" y="13" width="11" height="11" rx="1.8" fill="#c7a30c" stroke="#d6b62a" stroke-width="0.8"/><path d="M14.54 18.50L22.46 18.50M15.70 15.70L21.30 21.30M18.50 14.54L18.50 22.46M21.30 15.70L15.70 21.30" stroke="#fff" stroke-width="1.3" fill="none"/><circle cx="18.5" cy="18.5" r="1.5" fill="#fff"/><circle cx="18.5" cy="18.5" r="0.7" fill="#c7a30c"/></g>
<g transform="translate(664 61)"><path d="M4.4 1.2H21.8V21.8H4.4Z" fill="url(#scr)" stroke="#a8a8a8" stroke-width="1"/><path d="M2.2 2.6C2.2 0.6 6.4 0.6 6.4 2.6V19.4C4.6 19.4 2.2 20 2.2 21.8Z" fill="#ededed" stroke="#a2a2a2" stroke-width="0.9"/><path d="M2.2 21.8C2.4 19.8 5 19.4 6.4 19.4V21.8Z" fill="#d8d8d8" stroke="#a2a2a2" stroke-width="0.9"/><path d="M13 1.2H18V9.2L15.5 11.8L13 9.2Z" fill="url(#blg)" stroke="#2e5a92" stroke-width="0.9" stroke-linejoin="round"/></g>
<g transform="translate(697 61)"><circle cx="11.9" cy="11.9" r="10.7" fill="#f1f1f1" stroke="#4c4c4c" stroke-width="1.2"/><circle cx="20.80" cy="11.90" r="0.6" fill="#4a7fc0"/><circle cx="19.61" cy="16.35" r="0.6" fill="#4a7fc0"/><circle cx="16.35" cy="19.61" r="0.6" fill="#4a7fc0"/><circle cx="11.90" cy="20.80" r="0.6" fill="#4a7fc0"/><circle cx="7.45" cy="19.61" r="0.6" fill="#4a7fc0"/><circle cx="4.19" cy="16.35" r="0.6" fill="#4a7fc0"/><circle cx="3.00" cy="11.90" r="0.6" fill="#4a7fc0"/><circle cx="4.19" cy="7.45" r="0.6" fill="#4a7fc0"/><circle cx="7.45" cy="4.19" r="0.6" fill="#4a7fc0"/><circle cx="11.90" cy="3.00" r="0.6" fill="#4a7fc0"/><circle cx="16.35" cy="4.19" r="0.6" fill="#4a7fc0"/><circle cx="19.61" cy="7.45" r="0.6" fill="#4a7fc0"/><path d="M11.9 4.2V12.2L16.8 15.6" fill="none" stroke="#8c8c8c" stroke-width="1.4"/></g>
<g transform="translate(730 61)"><path d="M2 11C2 5.4 7 1.6 12.4 2.2C15 2.4 17 3.6 18.4 5.2L22.2 1.6V11H12.8L16 7.8C14.6 6.4 12.8 5.8 11 6.2C8.4 6.8 6.8 8.6 6.4 11Z" fill="#4f8fd8" stroke="#3a78c4" stroke-width="0.6" stroke-linejoin="round"/><path d="M22 13C22 18.6 17 22.4 11.6 21.8C9 21.6 7 20.4 5.6 18.8L1.8 22.4V13H11.2L8 16.2C9.4 17.6 11.2 18.2 13 17.8C15.6 17.2 17.2 15.4 17.6 13Z" fill="#3f7fcb" stroke="#346fb8" stroke-width="0.6" stroke-linejoin="round"/></g>
<g transform="translate(781 61)"><circle cx="8.6" cy="8.7" r="8.4" fill="url(#blg)" stroke="#5587c4" stroke-width="0.6"/><text x="8.4" y="13.6" text-anchor="middle" font-family="Liberation Serif, serif" font-style="italic" font-weight="bold" font-size="14.5" fill="#fff">i</text><g transform="rotate(-28 11.7 10.4)"><path transform="translate(11.7 10.4) scale(1.12)" d="M0 0L0 11L2.8 8.6L5 13.2L7 12.2L4.8 7.8L8.4 7.6Z" fill="#fff" stroke="#444" stroke-width="0.9" stroke-linejoin="round"/></g></g>
<g transform="translate(814 61)"><rect x="2.1" y="2.2" width="19.6" height="19.6" fill="#eef0f2" stroke="#d3d9de" stroke-width="1"/><rect x="2.6" y="2.7" width="18.6" height="4.4" fill="#e2e6ea"/><path d="M4.6 5H8.6M10.8 5H18.8" stroke="#cfd4d9" stroke-width="1.6"/><path d="M4.6 9.6H8.6M10.8 9.6H18.8M4.6 12.6H8.6M10.8 12.6H18.8M4.6 15.6H8.6M10.8 15.6H18.8M4.6 18.6H8.6M10.8 18.6H18.8" stroke="#d9dde1" stroke-width="1"/></g>
<g transform="translate(847 61)"><path d="M3.2 2V20.4M20.8 2V20.4" stroke="#d6d6d6" stroke-width="1.3"/><rect x="2" y="20.2" width="20" height="2" fill="#e0e0e0" stroke="#d0d0d0" stroke-width="0.6"/><path d="M3.2 4.8H20.8M3.2 10.8H20.8M3.2 16.8H20.8" stroke="#d9d9d9" stroke-width="0.9"/><path d="M7 4.8L9.4 2.6L11.8 4.8L9.4 7Z" fill="#f7f7f7" stroke="#ecd9d9" stroke-width="1"/><path d="M14.8 4.8L17.2 2.6L19.6 4.8L17.2 7Z" fill="#f7f7f7" stroke="#ecd9d9" stroke-width="1"/><path d="M5.2 10.8L7.6 8.6L10 10.8L7.6 13Z" fill="#f7f7f7" stroke="#dfe6dd" stroke-width="1"/><path d="M10 10.8L12.4 8.6L14.8 10.8L12.4 13Z" fill="#f7f7f7" stroke="#dfe6dd" stroke-width="1"/><path d="M5.2 16.8L7.6 14.6L10 16.8L7.6 19Z" fill="#f7f7f7" stroke="#e4e4e4" stroke-width="1"/><path d="M10 16.8L12.4 14.6L14.8 16.8L12.4 19Z" fill="#f7f7f7" stroke="#e4e4e4" stroke-width="1"/><path d="M14.8 16.8L17.2 14.6L19.6 16.8L17.2 19Z" fill="#f7f7f7" stroke="#e4e4e4" stroke-width="1"/></g>
<g transform="translate(880 61)"><rect x="10.2" y="1.6" width="3.6" height="10.4" rx="1.8" transform="rotate(0 12 12)" fill="#7aa5de" stroke="#3f76bc" stroke-width="0.8"/><rect x="10.2" y="1.6" width="3.6" height="10.4" rx="1.8" transform="rotate(45 12 12)" fill="#7aa5de" stroke="#3f76bc" stroke-width="0.8"/><rect x="10.2" y="1.6" width="3.6" height="10.4" rx="1.8" transform="rotate(90 12 12)" fill="#7aa5de" stroke="#3f76bc" stroke-width="0.8"/><rect x="10.2" y="1.6" width="3.6" height="10.4" rx="1.8" transform="rotate(135 12 12)" fill="#7aa5de" stroke="#3f76bc" stroke-width="0.8"/><rect x="10.2" y="1.6" width="3.6" height="10.4" rx="1.8" transform="rotate(180 12 12)" fill="#7aa5de" stroke="#3f76bc" stroke-width="0.8"/><rect x="10.2" y="1.6" width="3.6" height="10.4" rx="1.8" transform="rotate(225 12 12)" fill="#7aa5de" stroke="#3f76bc" stroke-width="0.8"/><rect x="10.2" y="1.6" width="3.6" height="10.4" rx="1.8" transform="rotate(270 12 12)" fill="#7aa5de" stroke="#3f76bc" stroke-width="0.8"/><rect x="10.2" y="1.6" width="3.6" height="10.4" rx="1.8" transform="rotate(315 12 12)" fill="#7aa5de" stroke="#3f76bc" stroke-width="0.8"/><circle cx="12" cy="12" r="6.6" fill="#7aa5de" stroke="#3f76bc" stroke-width="0.8"/><rect x="10.6" y="2" width="2.8" height="9.4" rx="1.4" transform="rotate(0 12 12)" fill="#7aa5de"/><rect x="10.6" y="2" width="2.8" height="9.4" rx="1.4" transform="rotate(45 12 12)" fill="#7aa5de"/><rect x="10.6" y="2" width="2.8" height="9.4" rx="1.4" transform="rotate(90 12 12)" fill="#7aa5de"/><rect x="10.6" y="2" width="2.8" height="9.4" rx="1.4" transform="rotate(135 12 12)" fill="#7aa5de"/><rect x="10.6" y="2" width="2.8" height="9.4" rx="1.4" transform="rotate(180 12 12)" fill="#7aa5de"/><rect x="10.6" y="2" width="2.8" height="9.4" rx="1.4" transform="rotate(225 12 12)" fill="#7aa5de"/><rect x="10.6" y="2" width="2.8" height="9.4" rx="1.4" transform="rotate(270 12 12)" fill="#7aa5de"/><rect x="10.6" y="2" width="2.8" height="9.4" rx="1.4" transform="rotate(315 12 12)" fill="#7aa5de"/><circle cx="12" cy="12" r="2.1" fill="#fff" stroke="#3f76bc" stroke-width="0.8"/></g>
<g transform="translate(913 61)"><text x="12" y="21.2" text-anchor="middle" font-family="Liberation Serif, serif" font-weight="bold" font-size="27" fill="#a3109c">Σ</text></g>
<g transform="translate(946 61)"><path d="M2.2 7H22M2.4 4.8V9.2M21.8 4.8V9.2" stroke="#2f4f80" stroke-width="1.5" fill="none"/><rect x="2.2" y="12.3" width="19.8" height="7.6" rx="0.8" fill="#c3c3c3" stroke="#666" stroke-width="1"/><path d="M4.6 13V15.6M7 13V15.6M9.4 13V15.6M11.8 13V17M14.2 13V15.6M16.6 13V15.6M19 13V15.6" stroke="#fff" stroke-width="1"/></g>
<g transform="translate(993 61)"><path d="M5.4 1.3H20.6C22.6 1.3 23.8 2.6 23.8 4.4V10.6C23.8 12.4 22.6 13.7 20.6 13.7H12.6L7 19.6L8.6 13.7H5.4C3.4 13.7 2.2 12.4 2.2 10.6V4.4C2.2 2.6 3.4 1.3 5.4 1.3Z" fill="#fcea92" stroke="#e2ba22" stroke-width="1.3" stroke-linejoin="round"/><circle cx="6.9" cy="19.3" r="3.5" fill="#77b577" stroke="#4f8d4f" stroke-width="1"/></g>
<g transform="translate(1026 61)"><rect x="9.2" y="0.6" width="3.6" height="9.6" rx="1.8" transform="rotate(0 11 10.2)" fill="#f2f2f2" stroke="#d9d9d9" stroke-width="0.8"/><rect x="9.2" y="0.6" width="3.6" height="9.6" rx="1.8" transform="rotate(36 11 10.2)" fill="#f2f2f2" stroke="#d9d9d9" stroke-width="0.8"/><rect x="9.2" y="0.6" width="3.6" height="9.6" rx="1.8" transform="rotate(72 11 10.2)" fill="#f2f2f2" stroke="#d9d9d9" stroke-width="0.8"/><rect x="9.2" y="0.6" width="3.6" height="9.6" rx="1.8" transform="rotate(108 11 10.2)" fill="#f2f2f2" stroke="#d9d9d9" stroke-width="0.8"/><rect x="9.2" y="0.6" width="3.6" height="9.6" rx="1.8" transform="rotate(144 11 10.2)" fill="#f2f2f2" stroke="#d9d9d9" stroke-width="0.8"/><rect x="9.2" y="0.6" width="3.6" height="9.6" rx="1.8" transform="rotate(180 11 10.2)" fill="#f2f2f2" stroke="#d9d9d9" stroke-width="0.8"/><rect x="9.2" y="0.6" width="3.6" height="9.6" rx="1.8" transform="rotate(216 11 10.2)" fill="#f2f2f2" stroke="#d9d9d9" stroke-width="0.8"/><rect x="9.2" y="0.6" width="3.6" height="9.6" rx="1.8" transform="rotate(252 11 10.2)" fill="#f2f2f2" stroke="#d9d9d9" stroke-width="0.8"/><rect x="9.2" y="0.6" width="3.6" height="9.6" rx="1.8" transform="rotate(288 11 10.2)" fill="#f2f2f2" stroke="#d9d9d9" stroke-width="0.8"/><rect x="9.2" y="0.6" width="3.6" height="9.6" rx="1.8" transform="rotate(324 11 10.2)" fill="#f2f2f2" stroke="#d9d9d9" stroke-width="0.8"/><circle cx="11" cy="10.2" r="7.2" fill="#f2f2f2" stroke="#d9d9d9" stroke-width="0.8"/><rect x="9.6" y="1" width="2.8" height="8.6" rx="1.4" transform="rotate(0 11 10.2)" fill="#f2f2f2"/><rect x="9.6" y="1" width="2.8" height="8.6" rx="1.4" transform="rotate(36 11 10.2)" fill="#f2f2f2"/><rect x="9.6" y="1" width="2.8" height="8.6" rx="1.4" transform="rotate(72 11 10.2)" fill="#f2f2f2"/><rect x="9.6" y="1" width="2.8" height="8.6" rx="1.4" transform="rotate(108 11 10.2)" fill="#f2f2f2"/><rect x="9.6" y="1" width="2.8" height="8.6" rx="1.4" transform="rotate(144 11 10.2)" fill="#f2f2f2"/><rect x="9.6" y="1" width="2.8" height="8.6" rx="1.4" transform="rotate(180 11 10.2)" fill="#f2f2f2"/><rect x="9.6" y="1" width="2.8" height="8.6" rx="1.4" transform="rotate(216 11 10.2)" fill="#f2f2f2"/><rect x="9.6" y="1" width="2.8" height="8.6" rx="1.4" transform="rotate(252 11 10.2)" fill="#f2f2f2"/><rect x="9.6" y="1" width="2.8" height="8.6" rx="1.4" transform="rotate(288 11 10.2)" fill="#f2f2f2"/><rect x="9.6" y="1" width="2.8" height="8.6" rx="1.4" transform="rotate(324 11 10.2)" fill="#f2f2f2"/><circle cx="11" cy="10.2" r="2.1" fill="#fff" stroke="#d9d9d9" stroke-width="0.8"/><circle cx="11" cy="10.2" r="5.6" fill="#d4d8dc" stroke="#cfd2d6" stroke-width="0.6"/><path d="M9.2 7.2V13.2L14.2 10.2Z" fill="#f4f4f4"/><g transform="rotate(-28 14.6 14)"><path transform="translate(14.6 14) scale(0.95)" d="M0 0L0 11L2.8 8.6L5 13.2L7 12.2L4.8 7.8L8.4 7.6Z" fill="#fafafa" stroke="#d4d4d4" stroke-width="0.9" stroke-linejoin="round"/></g></g>
<g transform="translate(1076 61)"><path d="M0.6 1.3H21.8V16.7H9.2L0.6 22.8L3.6 16.7H0.6Z" fill="#e9f1f6" stroke="#8f8f8f" stroke-width="1.1" stroke-linejoin="miter"/><text x="11.2" y="14.6" text-anchor="middle" font-family="Liberation Serif, serif" font-weight="bold" font-size="16.5" fill="#333">T</text></g>
<path d="M976.9 71H985.9L981.4 76Z" fill="#555"/>
<path d="M1058.1 70.8H1067.1L1062.6 75.8Z" fill="#b0b0b0"/>
<path d="M1106 70.8H1115L1110.5 75.8Z" fill="#444"/>
<g transform="translate(19 100)"><path d="M0.4 9.6L11.4 6.6L14.4 18.4L3.6 21.6Z" fill="#d9622c" stroke="#b84e1e" stroke-width="0.7"/><path d="M3.2 3.6L14.6 3L15.2 17.4L3.8 18Z" fill="#f6cf2f" stroke="#d9b016" stroke-width="0.7"/><path d="M10.9 0.3L24 3L21.8 15L7.5 12.2Z" fill="#5f8fc8" stroke="#3f72ae" stroke-width="0.9"/><rect x="14.9" y="15" width="9.1" height="8.7" rx="1.6" fill="#5fa467" stroke="#4c8f55" stroke-width="0.7"/><path d="M19.45 16.6V22.1M16.7 19.35H22.2" stroke="#fff" stroke-width="1.7"/></g>
<g transform="translate(52 100)"><circle cx="12.3" cy="7.8" r="8.4" fill="#7aa2d8" stroke="#3b5f94" stroke-width="0.8"/><path d="M6.4 3.4C8.6 1.6 10.8 2.8 10.2 4.8C9.8 6.4 8.4 5.6 7.8 7.4C7.2 8.8 5.6 7.6 5.4 5.8ZM12.6 2.6C14.6 1 17.8 2.4 18.4 5.2C18.6 7 17 6.6 16.4 5.6C15.4 4.4 13.8 5.6 12.8 4.4ZM10.6 7.4C12.6 6.4 15.4 7.4 14.6 10C14 11.6 11.6 11.4 10.8 10Z" fill="#2f5386"/><path d="M0.2 8.2L12.8 13.3V23.4L0.2 15.8Z" fill="#d9ae00" stroke="#3a3000" stroke-width="0.8" stroke-linejoin="round"/><path d="M12.8 13.3L23.8 7V17.6L12.8 23.4Z" fill="#fff27c" stroke="#3a3000" stroke-width="0.8" stroke-linejoin="round"/><rect x="15" y="15" width="9" height="8.7" rx="1.5" fill="#c7a30c"/><path d="M16.40 19.35L22.60 19.35M17.31 17.16L21.69 21.54M19.50 16.25L19.50 22.45M21.69 17.16L17.31 21.54" stroke="#fff" stroke-width="1.05" fill="none"/></g>
<g transform="translate(85 100)"><path d="M2.4 2.6L8.8 16.6L15.7 2.6L21.7 2.8" fill="none" stroke="#2e4257" stroke-width="1.4" stroke-linejoin="round"/><path d="M0.7 2.6L2.4 0.9L4.1 2.6L2.4 4.3Z" fill="#fff" stroke="#2e4257" stroke-width="0.9"/><path d="M14 2.6L15.7 0.9L17.4 2.6L15.7 4.3Z" fill="#fff" stroke="#2e4257" stroke-width="0.9"/><path d="M20 2.8L21.7 1.1L23.4 2.8L21.7 4.5Z" fill="#fff" stroke="#2e4257" stroke-width="0.9"/><circle cx="8.8" cy="16.8" r="1.8" fill="#fff" stroke="#2e4257" stroke-width="1"/><rect x="15" y="15" width="9" height="8.7" rx="1.5" fill="#c7a30c"/><path d="M16.40 19.35L22.60 19.35M17.31 17.16L21.69 21.54M19.50 16.25L19.50 22.45M21.69 17.16L17.31 21.54" stroke="#fff" stroke-width="1.05" fill="none"/></g>
<g transform="translate(118 100)"><path d="M0.8 23C2.4 17 5.6 10.4 11.4 5.6C15 2.8 19.6 1 23 0.3C23.2 4 21.6 7.2 18.6 9.8C14.6 13.2 8.2 15.2 4.6 16.8C3 18.6 1.8 21 1.4 23Z" fill="#8aa9d1" stroke="#4a6d9b" stroke-width="0.8" stroke-linejoin="round"/><path d="M1.2 22.6C4.4 14.6 11.8 6.6 22.4 1" fill="none" stroke="#dfe9f5" stroke-width="0.9"/><path d="M6.2 12.8L14.6 10.6M9.4 8.8L18.2 7.2M13 5.6L21 4" fill="none" stroke="#5f84b4" stroke-width="0.6"/><rect x="15" y="15" width="9" height="8.7" rx="1.5" fill="#c7a30c"/><path d="M16.40 19.35L22.60 19.35M17.31 17.16L21.69 21.54M19.50 16.25L19.50 22.45M21.69 17.16L17.31 21.54" stroke="#fff" stroke-width="1.05" fill="none"/></g>
<g transform="translate(151 100)"><path d="M6 2.6V6.6M9 2.6V6.6M12 2.6V6.6M15 2.6V6.6M18 2.6V6.6M6 16V20.4M9 16V20.4M12 16V20.4M15 16V20.4M18 16V20.4" stroke="#2f5a8f" stroke-width="1.3"/><rect x="3.2" y="6.5" width="18.9" height="9.7" rx="1.2" fill="#5f90cb" stroke="#2f5a8f" stroke-width="1.1"/><rect x="15" y="15" width="9" height="8.7" rx="1.5" fill="#c7a30c"/><path d="M16.40 19.35L22.60 19.35M17.31 17.16L21.69 21.54M19.50 16.25L19.50 22.45M21.69 17.16L17.31 21.54" stroke="#fff" stroke-width="1.05" fill="none"/></g>
<g transform="translate(192 100)"><rect x="1.1" y="0.8" width="22.1" height="22.2" rx="2.4" fill="url(#msh)" stroke="#4a70a4" stroke-width="1.5"/><path d="M2.8 2.6L8.6 17L14.6 2.6H21.4" fill="none" stroke="#2e4a70" stroke-width="1.4" stroke-linejoin="round"/><path d="M1.4 2.7L2.9 1.2L4.4 2.7L2.9 4.2Z" fill="#fff" stroke="#2e4257" stroke-width="0.9"/><path d="M13.1 2.7L14.6 1.2L16.1 2.7L14.6 4.2Z" fill="#fff" stroke="#2e4257" stroke-width="0.9"/><path d="M19.8 2.7L21.3 1.2L22.8 2.7L21.3 4.2Z" fill="#fff" stroke="#2e4257" stroke-width="0.9"/><circle cx="8.6" cy="17.2" r="1.8" fill="#fff" stroke="#2e4a70" stroke-width="1"/><rect x="15" y="15" width="9" height="8.7" rx="1.5" fill="#c7a30c"/><path d="M16.40 19.35L22.60 19.35M17.31 17.16L21.69 21.54M19.50 16.25L19.50 22.45M21.69 17.16L17.31 21.54" stroke="#fff" stroke-width="1.05" fill="none"/></g>
<g transform="translate(252 100)"><g transform="translate(1.4 21.6) rotate(-60.6158)"><path d="M0 0L5 -2.3H23.6415V2.3H5Z" fill="#dedbd6" stroke="#d0cdc8" stroke-width="0.7" stroke-linejoin="round"/><path d="M0 0L5 -2.3V2.3Z" fill="#e8e6e2" stroke="#d0cdc8" stroke-width="0.5"/><path d="M5 0H21.2415" stroke="#d0cdc8" stroke-width="0.6"/><rect x="21.2415" y="-2.3" width="2.4" height="4.6" fill="#f4f4f4" stroke="#d0cdc8" stroke-width="0.5"/></g><g transform="translate(6 22.4) rotate(-60.8519)"><path d="M0 0L5 -2.3H23.816V2.3H5Z" fill="#dedbd6" stroke="#d0cdc8" stroke-width="0.7" stroke-linejoin="round"/><path d="M0 0L5 -2.3V2.3Z" fill="#e8e6e2" stroke="#d0cdc8" stroke-width="0.5"/><path d="M5 0H21.416" stroke="#d0cdc8" stroke-width="0.6"/><rect x="21.416" y="-2.3" width="2.4" height="4.6" fill="#f4f4f4" stroke="#d0cdc8" stroke-width="0.5"/></g><path d="M16.2 18.9H24.2L20.2 23.5Z" fill="#9a9a9a"/></g>
<g transform="translate(283 100)"><g transform="translate(5.4 22.8) rotate(-58.4218)"><path d="M0 0L5 -2.3H25.5891V2.3H5Z" fill="#dedbd6" stroke="#d0cdc8" stroke-width="0.7" stroke-linejoin="round"/><path d="M0 0L5 -2.3V2.3Z" fill="#e8e6e2" stroke="#d0cdc8" stroke-width="0.5"/><path d="M5 0H23.1891" stroke="#d0cdc8" stroke-width="0.6"/><rect x="23.1891" y="-2.3" width="2.4" height="4.6" fill="#f4f4f4" stroke="#d0cdc8" stroke-width="0.5"/></g></g>
<g transform="translate(316 100)"><rect x="2.1" y="1" width="19.8" height="19.8" rx="2" fill="#d7d9dd" stroke="#cdd0d5" stroke-width="1"/><rect x="5.6" y="2.6" width="12.6" height="7.4" fill="#ebebeb"/><path d="M7 4.6H17M7 6.4H17M7 8.2H17" stroke="#dcdcdc" stroke-width="0.8"/><rect x="6.6" y="13.6" width="11" height="6.4" fill="#e6e8eb"/><rect x="8" y="14.6" width="2.2" height="4.2" fill="#d2d5da"/><g transform="translate(13.4 23.4) rotate(-57.4259)"><path d="M0 0L5 -1.8H17.088V1.8H5Z" fill="#ddd2cc" stroke="#d2c8c2" stroke-width="0.7" stroke-linejoin="round"/><path d="M0 0L5 -1.8V1.8Z" fill="#e8e6e2" stroke="#d2c8c2" stroke-width="0.5"/><path d="M5 0H14.688" stroke="#d2c8c2" stroke-width="0.6"/><rect x="14.688" y="-1.8" width="2.4" height="3.6" fill="#f4f4f4" stroke="#d2c8c2" stroke-width="0.5"/></g></g>
<g transform="translate(350 100)"><path d="M1.2 6.4C1.2 2.2 6 0.6 10 1.4C13.4 2.4 17 1.4 20.4 2.2C23.2 3.2 23.2 7 21.2 9.4C19 12 15.4 11.2 12 11.2C8.4 11.4 6.6 13.6 4.2 12.4C1.8 11.2 1.2 9 1.2 6.4Z" fill="#dddfdc" stroke="#cbcdc9" stroke-width="0.9"/><rect x="13" y="12.8" width="10.8" height="10.8" rx="1.8" fill="#c8c6ba" stroke="#cfcdc2" stroke-width="0.8"/><path d="M14.51 18.20L22.29 18.20M15.65 15.45L21.15 20.95M18.40 14.31L18.40 22.09M21.15 15.45L15.65 20.95" stroke="#f2f2ee" stroke-width="1.3" fill="none"/><circle cx="18.4" cy="18.2" r="1.5" fill="#f2f2ee"/><circle cx="18.4" cy="18.2" r="0.7" fill="#c8c6ba"/></g>
<g transform="translate(385 100)"><path d="M5.8 8.4L0.8 21.4M8.4 5.9H19" stroke="#cfcfcb" stroke-width="0.9" fill="none"/><rect x="3.4" y="3.4" width="5" height="5" fill="#f4f4f4" stroke="#c8c8c4" stroke-width="0.9"/><path d="M4.8 4.8L7 7M7 4.8L4.8 7" stroke="#c4c4c0" stroke-width="0.8"/><path d="M9.6 21.4L19.4 10.6" stroke="#d8d7c8" stroke-width="2.6" stroke-linecap="round"/><path d="M11.4 12.4L19.6 21" stroke="#d4d4cf" stroke-width="2.6" stroke-linecap="round"/><path d="M9.4 13.2L13.6 9.4L15.4 11.2L11.4 15Z" fill="#d2d2cd"/></g>
<g transform="translate(431 100)"><rect x="2.2" y="2.3" width="19.5" height="4.8" fill="#dedccf" stroke="#cfcdbd" stroke-width="0.8"/><rect x="2.2" y="9.3" width="19.5" height="4.8" fill="#dedccf" stroke="#cfcdbd" stroke-width="0.8"/><rect x="2.2" y="16.5" width="19.5" height="5" fill="#dedccf" stroke="#cfcdbd" stroke-width="0.8"/><g transform="translate(9.2 22.6) rotate(-61.574)"><path d="M0 0L5 -2H24.7887V2H5Z" fill="#e3dedb" stroke="#d5cfcc" stroke-width="0.7" stroke-linejoin="round"/><path d="M0 0L5 -2V2Z" fill="#e8e6e2" stroke="#d5cfcc" stroke-width="0.5"/><path d="M5 0H22.3887" stroke="#d5cfcc" stroke-width="0.6"/><rect x="22.3887" y="-2" width="2.4" height="4" fill="#f4f4f4" stroke="#d5cfcc" stroke-width="0.5"/></g></g>
<g transform="translate(463 100)"><rect x="3.2" y="2.1" width="13.4" height="13.5" fill="#dedcd0" stroke="#d2d0c2" stroke-width="0.8"/><path d="M5.6 4.6H20.4V6.4H5.6Z" fill="#d8cccc"/><path d="M5.8 7.4H20.2L19.6 22.6H6.6Z" fill="#dccfcf" stroke="#d2c4c4" stroke-width="0.8"/><path d="M9.4 9.4V21M13 9.4V21M16.6 9.4V21M7 14.6H19.4" stroke="#efe8e8" stroke-width="1.3"/></g>
<g transform="translate(497 100)"><path d="M1.4 10.6L15.4 12.6L1.6 12.6Z" fill="#e4e4e4" stroke="#d4d4d4" stroke-width="0.7"/><path d="M2.6 5L16 14.4L14.4 15.2Z" fill="#e8e8e8" stroke="#d6d6d6" stroke-width="0.7"/><ellipse cx="19" cy="8.8" rx="3.6" ry="2.4" transform="rotate(-35 19 8.8)" fill="none" stroke="#dccdd0" stroke-width="1.5"/><ellipse cx="19" cy="17.6" rx="3.6" ry="2.4" transform="rotate(50 19 17.6)" fill="none" stroke="#dccdd0" stroke-width="1.5"/></g>
<g transform="translate(529 100)"><path d="M9.4 2.1H17.4L20.8 5.5V17.3H9.4Z" fill="#f8f8f8" stroke="#dadada" stroke-width="0.9" stroke-linejoin="round"/><path d="M17.4 2.1V5.5H20.8" fill="none" stroke="#dadada" stroke-width="0.765"/><path d="M5.1 6.2H13.3L16.7 9.6V21.6H5.1Z" fill="#f8f8f8" stroke="#c9c9c9" stroke-width="1" stroke-linejoin="round"/><path d="M13.3 6.2V9.6H16.7" fill="none" stroke="#c9c9c9" stroke-width="0.85"/><path d="M7 13H14.6M7 15.2H13M7 17.4H14.6M7 19.6H13" stroke="#dcdcdc" stroke-width="0.9"/></g>
<g transform="translate(563 100)"><rect x="4.1" y="2.6" width="15.8" height="19.3" fill="#f0efea" stroke="#d2cec2" stroke-width="1.1"/><rect x="8" y="1" width="8" height="3.6" fill="#e4e4e4" stroke="#d4d4d4" stroke-width="0.7"/><path d="M6.6 5.4H14.4L17.4 8.4V20H6.6Z" fill="#fafafa" stroke="#d0d0d0" stroke-width="0.9" stroke-linejoin="round"/><path d="M14.4 5.4V8.4H17.4" fill="none" stroke="#d0d0d0" stroke-width="0.765"/><path d="M8.2 11.6H15.6M8.2 13.8H14M8.2 16H15.6M8.2 18.2H14" stroke="#dedede" stroke-width="0.9"/></g>
<g transform="translate(596 100)"><path d="M3 11L10.4 3V7.6C17 7.4 21.2 10.6 21 15.6C20.8 19 18 21 13.6 20.8V17C16 17.2 17 16 16.8 14.6C16.4 13 14 12.8 10.4 13V18Z" fill="#dfd9d5" stroke="#d8d2ce" stroke-width="0.6" stroke-linejoin="round"/></g>
<g transform="translate(629 100)"><path d="M3 11L10.4 3V7.6C17 7.4 21.2 10.6 21 15.6C20.8 19 18 21 13.6 20.8V17C16 17.2 17 16 16.8 14.6C16.4 13 14 12.8 10.4 13V18Z" transform="translate(24 0) scale(-1 1)" fill="#d9dcd9" stroke="#d1d5d1" stroke-width="0.6" stroke-linejoin="round"/></g>
<g transform="translate(679 100)"><path d="M1.2 9.45L5.7 4.4H21.8V14.5H5.7Z" fill="#dedccf" stroke="#d2d0c2" stroke-width="1" stroke-linejoin="round"/><text x="13.2" y="12.7" text-anchor="middle" font-family="Liberation Sans, sans-serif" font-weight="bold" font-size="8.8" fill="#c2c1b6">abc</text></g>
<g transform="translate(712 100)"><circle cx="10" cy="8.8" r="7" fill="#d7ddd7" stroke="#d0d4ce" stroke-width="0.7"/><path d="M10 8.8V1.8A7 7 0 0 1 16.2 12Z" fill="#dcd3d3"/><path d="M10 8.8L4.4 4.6A7 7 0 0 1 10 1.8Z" fill="#e0ded0"/><rect x="11.4" y="16.2" width="4.1" height="6.3" fill="#dedccf"/><rect x="15.5" y="10.5" width="3.6" height="12" fill="#cfd9d2"/><rect x="19.1" y="17.3" width="3.7" height="5.2" fill="#dbcfd2"/></g>
<g transform="translate(753 100)"><path d="M1.2 9.45L5.7 4.4H21.8V14.5H5.7Z" fill="#cfe1f9" stroke="#3c8be8" stroke-width="1.3" stroke-linejoin="round"/><text x="10.6" y="12.7" text-anchor="middle" font-family="Liberation Sans, sans-serif" font-weight="bold" font-size="9.2" fill="#1a1a1a">ab</text><path d="M17.8 7.4C17.8 6.2 19.6 6.2 19.6 7.4L20.2 13.6H17.4Z" fill="#f2f2f2" stroke="#9aa" stroke-width="0.6"/><circle cx="20" cy="17.9" r="4.6" fill="url(#redball)"/></g>
<g transform="translate(786 100)"><path d="M1.2 9.4L5.4 4.2H21.9V14.6H5.4Z" fill="#fde3e3" stroke="#ee1414" stroke-width="1.5" stroke-linejoin="round"/><text x="13.4" y="12.7" text-anchor="middle" font-family="Liberation Sans, sans-serif" font-weight="bold" font-size="8.8" fill="#e81212">abc</text></g>
<g transform="translate(828 100)"><path d="M1.2 9.45L5.7 4.4H21.8V14.5H5.7Z" fill="#dedccf" stroke="#d2d0c2" stroke-width="1" stroke-linejoin="round"/><text x="10.4" y="12.7" text-anchor="middle" font-family="Liberation Sans, sans-serif" font-weight="bold" font-size="8.8" fill="#c2c1b6">ab</text><path d="M17.4 7.4C17.4 6.2 19.2 6.2 19.2 7.4L19.8 13.6H17Z" fill="#f4f4f4" stroke="#dcdcdc" stroke-width="0.6"/><circle cx="18.6" cy="17.9" r="4.6" fill="#d7cdd0"/></g>
<g transform="translate(861 100)"><path d="M1.2 9.45L5.7 4.4H21.8V14.5H5.7Z" fill="#dedccf" stroke="#d2d0c2" stroke-width="1" stroke-linejoin="round"/><text x="13.2" y="12.7" text-anchor="middle" font-family="Liberation Sans, sans-serif" font-weight="bold" font-size="8.8" fill="#c2c1b6">abc</text><path d="M9.2 19.4C12.4 15 19.4 15 23 19.4C19.4 23.6 12.4 23.6 9.2 19.4Z" fill="#f4f4f4" stroke="#d6d6d6" stroke-width="0.9"/><circle cx="16" cy="19.2" r="2.4" fill="#d3d7de"/><circle cx="16" cy="19.2" r="1" fill="#c0c4cc"/></g>
<g transform="translate(894 100)"><path d="M0.2 9.45L4.6 4.4H20.8V14.5H4.6Z" fill="#dedccf" stroke="#d2d0c2" stroke-width="1" stroke-linejoin="round"/><text x="12.4" y="12.7" text-anchor="middle" font-family="Liberation Sans, sans-serif" font-weight="bold" font-size="8.8" fill="#c2c1b6">abc</text><rect x="13.2" y="13.2" width="10.5" height="10.2" rx="1.8" fill="#cacaca" stroke="#d6d6d6" stroke-width="0.6"/><path d="M15 17.2H18.6V15L22.4 18.3L18.6 21.6V19.4H15Z" fill="#fafafa"/></g>
<g transform="translate(927 100)"><path d="M0.2 9.45L4.6 4.4H20.8V14.5H4.6Z" fill="#dedccf" stroke="#d2d0c2" stroke-width="1" stroke-linejoin="round"/><text x="12.4" y="12.7" text-anchor="middle" font-family="Liberation Sans, sans-serif" font-weight="bold" font-size="8.8" fill="#c2c1b6">abc</text><rect x="13.2" y="13.2" width="10.5" height="10.2" rx="1.8" fill="#cacaca" stroke="#d6d6d6" stroke-width="0.6"/><path d="M15.6 19.4A3 3 0 1 1 18.6 21.6" fill="none" stroke="#f2f2f2" stroke-width="1.6"/><path d="M13.9 18.4L15.6 21L17.4 18.6Z" fill="#f2f2f2"/></g>
<g transform="translate(960 100)"><path d="M0.2 9.45L4.6 4.4H20.8V14.5H4.6Z" fill="#dedccf" stroke="#d2d0c2" stroke-width="1" stroke-linejoin="round"/><text x="12.4" y="12.7" text-anchor="middle" font-family="Liberation Sans, sans-serif" font-weight="bold" font-size="8.8" fill="#c2c1b6">abc</text><rect x="13.2" y="13.2" width="10.5" height="10.2" rx="1.8" fill="#dbd9cc" stroke="#d6d6d6" stroke-width="0.6"/><path d="M15.4 21.8L16 19.6L20.6 15L22 16.4L17.4 21.2Z" fill="#f6f6f2"/></g>
<g transform="translate(1011 100)"><circle cx="12" cy="11.6" r="11.4" fill="#5b86bd" stroke="#1c3558" stroke-width="1"/><path d="M0.8 11.6H23.2M2.4 6H21.6M2.4 17H21.6M12 0.4V22M6.4 1.8C3.6 7.6 3.6 15.6 6.4 21.4M17.6 1.8C20.4 7.6 20.4 15.6 17.6 21.4" fill="none" stroke="#c5d6ea" stroke-width="0.8"/><path d="M4.2 7.4H8.6V9.8H4.2ZM10.2 7H14.6V10H10.2ZM16 7.4H19.6V12.4H16ZM6.6 11.4H9.8V13.6H6.6Z" fill="#1f3b63"/><path d="M8.4 13.4H11.2L11.8 15.6H12.4L13 13.4H15.6L20.6 19.4H15.2L13.8 17.2H10.4L9 19.4H3.6Z" fill="#000"/><ellipse cx="6.8" cy="20.8" rx="4" ry="2.9" fill="#000"/><ellipse cx="17.8" cy="20.8" rx="4" ry="2.9" fill="#000"/><ellipse cx="6.8" cy="21.1" rx="2.4" ry="1.5" fill="#fff"/><ellipse cx="17.8" cy="21.1" rx="2.4" ry="1.5" fill="#fff"/></g>
<g transform="translate(1062 100)"><path d="M11.6 2C8.4 2 7.4 3.2 7.4 5V7.4H12.2V8.2H5.2C3.2 8.2 2 9.8 2 12.2C2 14.8 3.2 16.2 5 16.2H7V13.4C7 11.6 8.4 10.2 10.2 10.2H14.6C16 10.2 17 9.2 17 7.8V5C17 3.2 15.4 2 11.6 2Z" fill="#3b78ae"/><circle cx="9.6" cy="4.6" r="0.9" fill="#fff"/><path d="M12.4 22C15.6 22 16.6 20.8 16.6 19V16.6H11.8V15.8H18.8C20.8 15.8 22 14.2 22 11.8C22 9.2 20.8 7.8 19 7.8H17V10.6C17 12.4 15.6 13.8 13.8 13.8H9.4C8 13.8 7 14.8 7 16.2V19C7 20.8 8.6 22 12.4 22Z" fill="#f9cf3e"/><circle cx="14.4" cy="19.4" r="0.9" fill="#fff"/><path d="M17.2 18L22.8 20.2L17.2 22.4" fill="none" stroke="#333" stroke-width="1.2"/></g>
<g transform="translate(1113 100)"><rect x="2.2" y="1.2" width="19.8" height="20.8" rx="0.8" fill="#5f90cb" stroke="#1f2d3d" stroke-width="1"/><rect x="2.6" y="1.6" width="4.6" height="20" fill="#2d3f52"/><text x="14.4" y="17.4" text-anchor="middle" font-family="Liberation Serif, serif" font-size="15.5" fill="#fff">?</text></g>
<path d="M413.8 109.8H422.8L418.3 114.8Z" fill="#9a9a9a"/>
<g transform="translate(19 139)"><rect x="1.3" y="1.3" width="21.6" height="19.4" fill="#f3f3f3" stroke="#c2c2c2" stroke-width="0.9" stroke-dasharray="1.6 1.4"/><rect x="2" y="2" width="14.2" height="13.6" fill="#e0ded6"/><path transform="translate(9.9 9) scale(1.35)" d="M0 0L0 11L2.8 8.6L5 13.2L7 12.2L4.8 7.8L8.4 7.6Z" fill="#fcfcfc" stroke="#d2d2d2" stroke-width="0.9" stroke-linejoin="round"/></g>
<g transform="translate(68 139)"><rect x="5.6" y="8.3" width="15.2" height="13.3" fill="#e0ded2" stroke="#d6d4c8" stroke-width="0.7"/><rect x="2.3" y="3.1" width="14.3" height="13.3" fill="#f2f2f2" stroke="#d6d6d6" stroke-width="1"/><rect x="4.4" y="5.6" width="10.2" height="2.8" fill="#fafafa" stroke="#dcdcdc" stroke-width="0.8"/><rect x="4.4" y="10.6" width="10.2" height="2.8" fill="#fafafa" stroke="#dcdcdc" stroke-width="0.8"/></g>
<g transform="translate(115 139)"><rect x="2.3" y="2.5" width="13.6" height="13" fill="#fce94f" stroke="#c4a000" stroke-width="1.2"/><rect x="6.5" y="6.5" width="13.3" height="13.2" fill="#fce94f" stroke="#c4a000" stroke-width="1.2"/><rect x="13.3" y="13.3" width="10.4" height="10.4" rx="2" fill="#dc2028"/><circle cx="18.5" cy="18.5" r="3.3" fill="#fff"/><path d="M16 20.8L21 16.2" stroke="#dc2028" stroke-width="1.5"/></g>
<g transform="translate(163 139)"><rect x="2.2" y="2.2" width="13.6" height="13.3" fill="#fce94f" stroke="#c4a000" stroke-width="1.2"/><path d="M19.3 22.8C17.4 19.6 16 17.6 16 15.6A3.3 3.3 0 0 1 22.6 15.6C22.6 17.6 21.2 19.6 19.3 22.8Z" fill="#5d86aa" stroke="#4b7498" stroke-width="0.6"/><circle cx="19.3" cy="15.4" r="1.2" fill="#fff"/></g>
<g transform="translate(214 139)"><rect x="3" y="4" width="14.6" height="16.8" fill="#f6f6f6" stroke="#dedede" stroke-width="0.6"/><path d="M2.4 2.4V21.3H21.6" fill="none" stroke="#777" stroke-width="1.4"/><path d="M0.6 4L2.4 1L4.2 4ZM20.4 19.5L23.2 21.3L20.4 23.1Z" fill="#777"/><path d="M5.4 15.5C9 14 11.4 14.4 13.2 11.4C15 8 15.6 5.6 17.4 4.8C19 4 20.4 4.2 22.3 3.4" fill="none" stroke="#b62aa8" stroke-width="1.5"/><path d="M5.4 18.3C9 17.6 11.4 17.4 13.4 15.8C15.4 14 16.6 13 18.4 13.2C20 13.4 20.8 14 22.3 14.2" fill="none" stroke="#2a9cb2" stroke-width="1.4"/></g>
<path d="M49.9 148.8H58.9L54.4 153.8Z" fill="#9e9e9e"/>
<path d="M98.1 148.8H107.1L102.6 153.8Z" fill="#b0b0b0"/>
<path d="M146.2 148.8H155.2L150.7 153.8Z" fill="#444"/>
<g transform="translate(8 197)"><path d="M1 6.4L5 3.4L9.6 5.6L5.6 9Z" fill="#f3d222"/><path d="M1 6.4L5.6 9L5.2 11.6L0.8 9.2Z" fill="#5b8ec9"/><path d="M0.8 9.2L5.2 11.6L7.4 13.4L3 12.6Z" fill="#e23a3a"/><path d="M14.4 1L9 8.4" stroke="#b8863a" stroke-width="1.8" stroke-linecap="round"/><path d="M6.2 8.4L9.4 6.6L11.4 9.6L8 12.6Z" fill="#d9a85a" stroke="#a8783a" stroke-width="0.6"/></g>
<g transform="translate(33 197)"><path d="M1.5 9.5V14.5H9" fill="none" stroke="#8a8a8a" stroke-width="1"/><path d="M3.5 7.5V12.5H11" fill="none" stroke="#8a8a8a" stroke-width="1"/><rect x="5.5" y="3.5" width="8" height="7" fill="#fbfbfb" stroke="#808080" stroke-width="1"/><path d="M7.5 9V2.6C7.5 0.4 10.5 0.4 10.5 2.6V8" fill="none" stroke="#3a6ea8" stroke-width="1.1"/><rect x="9.2" y="9.8" width="6.4" height="6" rx="1.2" fill="#5fa467"/><circle cx="12.4" cy="12.8" r="1.6" fill="#fff"/></g>
<g transform="translate(59 197)"><path d="M0.2 7.6C3.6 2.2 11.6 2.2 15.4 7.6C11.6 12.4 3.6 12.4 0.2 7.6Z" fill="#f4f4f4" stroke="#8a8a8a" stroke-width="1"/><path d="M1.4 4.6C4.8 1 11 1 14.6 4.2" fill="none" stroke="#a8a8a8" stroke-width="0.7"/><circle cx="7.6" cy="7.2" r="3.3" fill="#4a7dc0"/><circle cx="7.8" cy="7.2" r="1.4" fill="#111"/><circle cx="6.8" cy="6" r="0.8" fill="#fff"/><path d="M9.6 11.4H16.6L13.1 15.8Z" fill="#333"/></g>
<g transform="translate(83 197)"><path d="M1 3.2H15L9.6 9.4V15.2L6.4 14V9.4Z" fill="#5f90cb" stroke="#3f72ae" stroke-width="0.8" stroke-linejoin="round"/><rect x="1.2" y="0.8" width="13.6" height="2.4" rx="0.8" fill="#f7e04a" stroke="#d6b91e" stroke-width="0.6"/></g>
<g transform="translate(109 197)"><text x="0.6" y="11.6" font-family="Liberation Serif, serif" font-size="15.5" fill="#cfcfcf">ε</text><path d="M7.6 9.4H14.4L12.6 11.6V15.6H9.4V11.6Z" fill="#ececec" stroke="#dedede" stroke-width="0.6"/></g>
<g transform="translate(149 197)"><path d="M0.6 1.6H7.6M2.4 1.6V13.6M2.4 6.4H5M2.4 12.4H5" fill="none" stroke="#888" stroke-width="1"/><rect x="3.6" y="4.6" width="3" height="3.2" fill="#f6a11c" stroke="#d98a10" stroke-width="0.5"/><rect x="3.6" y="10.8" width="3" height="3.2" fill="#f6a11c" stroke="#d98a10" stroke-width="0.5"/><path d="M8.8 0.6H12.4V9H14.8L10.6 14.8L6.4 9H8.8Z" fill="#4a7dc0" stroke="#2f5f9c" stroke-width="0.7" stroke-linejoin="round"/></g>
<g transform="translate(174 197)"><path d="M0.6 1.6H7.6M2.4 1.6V13.6M2.4 6.4H5M2.4 12.4H5" fill="none" stroke="#888" stroke-width="1"/><rect x="3.6" y="4.6" width="3" height="3.2" fill="#f6a11c" stroke="#d98a10" stroke-width="0.5"/><rect x="3.6" y="10.8" width="3" height="3.2" fill="#f6a11c" stroke="#d98a10" stroke-width="0.5"/><path d="M8.8 0.6H12.4V9H14.8L10.6 14.8L6.4 9H8.8Z" transform="translate(0 15.4) scale(1 -1)" fill="#4a7dc0" stroke="#2f5f9c" stroke-width="0.7" stroke-linejoin="round"/></g>
<g transform="translate(198 197)"><rect x="1.6" y="1.2" width="11" height="11" fill="#f6f6f6" stroke="#8a8a8a" stroke-width="1"/><rect x="9.2" y="10.6" width="6.2" height="4.4" rx="1.2" fill="#e8323c"/><path d="M10.6 12.8H14" stroke="#fff" stroke-width="1.2"/></g>
<path d="M131.6 203.25H139.6L135.6 207.75Z" fill="#b0b0b0"/>
<g transform="translate(1136 1003)"><path d="M15.5 9.5C19 11.5 21 15 19.8 18.5C19 20.5 17.5 21.3 15.8 21.3" fill="none" stroke="#cdbcbc" stroke-width="1.4"/><g transform="rotate(-34 8 8.4)"><rect x="3" y="1.4" width="10" height="14.6" rx="4.8" fill="#fff" stroke="#000" stroke-width="2.1"/><path d="M8 2.6V11.4" stroke="#000" stroke-width="2.4"/><path d="M3.4 11.6H12.6" stroke="#000" stroke-width="1.6"/></g><circle cx="12.4" cy="15.3" r="5.3" fill="#fff" stroke="#000" stroke-width="1.7"/><circle cx="12.6" cy="15.7" r="1.5" fill="#fff" stroke="#000" stroke-width="1.2"/><rect x="18" y="2" width="1.3" height="1.3" fill="#000"/><rect x="16" y="4" width="1.3" height="1.3" fill="#000"/><rect x="13.8" y="4.9" width="1.2" height="1.2" fill="#555"/><rect x="1.4" y="13.6" width="1.4" height="1.4" fill="#888"/></g>
<g transform="translate(1314 1004)"><path d="M4 9V6.2C4 1.4 12 1.4 12 6.2V9" fill="none" stroke="#8c8c8c" stroke-width="2.2"/><rect x="1.4" y="8.6" width="13.2" height="10.4" rx="1.4" fill="#737373"/></g>
<g transform="translate(1776 1003.5)" fill="none" stroke="#696969" stroke-width="1.15"><path d="M1 9.4L5 2.4H15L19 9.4Z" fill="#e9e9e9"/><path d="M2.6 10.4C2.6 18 17.4 18 17.4 10.4Z" fill="#e9e9e9"/><path d="M1 9.4H19M3.2 5.6H16.8M10 2.4V17.8M6.4 2.4L5.6 9.4C5.6 13 7 16 8.4 17.4M13.6 2.4L14.4 9.4C14.4 13 13 16 11.6 17.4M3.4 13.4H16.6" stroke-width="0.95"/></g>
<g transform="translate(1893 1004)"><path d="M10 0.8C15.4 0.8 19.8 4 19.8 8.4C19.8 11 18.4 13 16.2 14.4L18.6 18.6L13 15.6C12 15.8 11 16 10 16C4.6 16 0.2 12.6 0.2 8.4C0.2 4 4.6 0.8 10 0.8Z" fill="#6a6a6a"/><circle cx="5.4" cy="8.4" r="1.5" fill="#fff"/><circle cx="10" cy="8.4" r="1.5" fill="#fff"/><circle cx="14.6" cy="8.4" r="1.5" fill="#fff"/></g>
</svg>
<span id="t0" class="t" style="left:27.0px;top:6.88px;font-size:15.5px;color:#000;letter-spacing:-0.438px;">*Proyecto sin título — QGIS</span>
<span id="t1" class="t" style="left:11.0px;top:33.65px;font-size:15.3px;color:#000;letter-spacing:-0.385px;">Pro<u>y</u>ecto</span>
<span id="t2" class="t" style="left:84.0px;top:33.65px;font-size:15.3px;color:#000;letter-spacing:-0.231px;"><u>E</u>ditar</span>
<span id="t3" class="t" style="left:136.7px;top:33.65px;font-size:15.3px;color:#000;letter-spacing:-0.388px;"><u>V</u>er</span>
<span id="t4" class="t" style="left:174.0px;top:33.65px;font-size:15.3px;color:#000;letter-spacing:-0.884px;"><u>C</u>apa</span>
<span id="t5" class="t" style="left:223.3px;top:33.65px;font-size:15.3px;color:#000;letter-spacing:-0.159px;">Con<u>f</u>iguración</span>
<span id="t6" class="t" style="left:331.0px;top:33.65px;font-size:15.3px;color:#000;letter-spacing:-0.164px;">Co<u>m</u>plementos</span>
<span id="t7" class="t" style="left:446.7px;top:33.65px;font-size:15.3px;color:#000;letter-spacing:-0.163px;">Vect<u>o</u>rial</span>
<span id="t8" class="t" style="left:520.0px;top:33.65px;font-size:15.3px;color:#000;letter-spacing:-0.741px;"><u>R</u>áster</span>
<span id="t9" class="t" style="left:576.7px;top:33.65px;font-size:15.3px;color:#000;letter-spacing:-0.442px;">Base de <u>d</u>atos</span>
<span id="t10" class="t" style="left:683.3px;top:33.65px;font-size:15.3px;color:#000;letter-spacing:-0.395px;"><u>W</u>eb</span>
<span id="t11" class="t" style="left:729.3px;top:33.65px;font-size:15.3px;color:#000;letter-spacing:-0.036px;"><u>M</u>alla</span>
<span id="t12" class="t" style="left:781.0px;top:33.65px;font-size:15.3px;color:#000;letter-spacing:-0.771px;">Pro<u>c</u>esos</span>
<span id="t13" class="t" style="left:854.3px;top:33.65px;font-size:15.3px;color:#000;letter-spacing:-0.383px;">A<u>y</u>uda</span>
<span id="t14" class="t" style="left:4.4px;top:174.36px;font-size:14.7px;color:#000;letter-spacing:-0.637px;">Capas</span>
<span id="t15" class="t" style="left:77.5px;top:225.90px;font-size:15px;color:#000;font-weight:bold;letter-spacing:-0.474px;">Provincia</span>
<span id="t16" class="t" style="left:78.3px;top:247.90px;font-size:15px;color:#fff;font-weight:bold;letter-spacing:-0.201px;text-decoration:underline;">p_2019_12</span>
<span id="t17" class="t" style="left:78.3px;top:269.90px;font-size:15px;color:#000;font-weight:bold;letter-spacing:-0.103px;">p_2019_11</span>
<span id="t18" class="t" style="left:78.3px;top:291.90px;font-size:15px;color:#000;font-weight:bold;letter-spacing:-0.201px;">p_2019_10</span>
<span id="t19" class="t" style="left:78.3px;top:313.90px;font-size:15px;color:#000;font-weight:bold;letter-spacing:-0.201px;">p_2019_09</span>
<span id="t20" class="t" style="left:78.3px;top:335.90px;font-size:15px;color:#000;font-weight:bold;letter-spacing:-0.201px;">p_2019_08</span>
<span id="t21" class="t" style="left:78.3px;top:357.90px;font-size:15px;color:#000;font-weight:bold;letter-spacing:-0.201px;">p_2019_07</span>
<span id="t22" class="t" style="left:78.3px;top:379.90px;font-size:15px;color:#000;font-weight:bold;letter-spacing:-0.201px;">p_2019_06</span>
<span id="t23" class="t" style="left:78.3px;top:401.90px;font-size:15px;color:#000;font-weight:bold;letter-spacing:-0.201px;">p_2019_05</span>
<span id="t24" class="t" style="left:78.3px;top:423.90px;font-size:15px;color:#000;font-weight:bold;letter-spacing:-0.201px;">p_2019_04</span>
<span id="t25" class="t" style="left:78.3px;top:445.90px;font-size:15px;color:#000;font-weight:bold;letter-spacing:-0.201px;">p_2019_03</span>
<span id="t26" class="t" style="left:78.3px;top:467.90px;font-size:15px;color:#000;font-weight:bold;letter-spacing:-0.201px;">p_2019_02</span>
<span id="t27" class="t" style="left:78.3px;top:489.90px;font-size:15px;color:#000;font-weight:bold;letter-spacing:-0.201px;">p_2019_01</span>
<span id="t28" class="t" style="left:15.2px;top:976.96px;font-size:13.4px;color:#000;letter-spacing:-0.715px;">Capas</span>
<span id="t29" class="t" style="left:80.0px;top:975.96px;font-size:13.4px;color:#000;letter-spacing:-0.531px;">Navegador</span>
<span id="t30" class="t" style="left:38.3px;top:1007.15px;font-size:14px;color:#8c8c8c;letter-spacing:-0.503px;">Escriba para localizar (Ctrl+K)</span>
<span id="t31" class="t" style="left:318.3px;top:1007.75px;font-size:14px;color:#000;letter-spacing:-0.526px;">2 legend entries removed.</span>
<span id="t32" class="t" style="left:951.5px;top:1007.75px;font-size:14px;color:#000;letter-spacing:-0.996px;">Coordenada</span>
<span id="t33" class="t" style="left:1030.6px;top:1007.75px;font-size:14px;color:#000;letter-spacing:-0.845px;">327786,3980466</span>
<span id="t34" class="t" style="left:1170.5px;top:1008.26px;font-size:13.4px;color:#000;letter-spacing:-0.946px;">Escala</span>
<span id="t35" class="t" style="left:1213.0px;top:1007.75px;font-size:14px;color:#000;letter-spacing:-0.610px;">1:1839943</span>
<span id="t36" class="t" style="left:1339.4px;top:1007.75px;font-size:14px;color:#000;letter-spacing:-0.594px;">Amplificador</span>
<span id="t37" class="t" style="left:1418.5px;top:1007.75px;font-size:14px;color:#000;letter-spacing:-0.804px;">100%</span>
<span id="t38" class="t" style="left:1515.5px;top:1007.75px;font-size:14px;color:#000;letter-spacing:-0.969px;">Rotación</span>
<span id="t39" class="t" style="left:1578.0px;top:1007.75px;font-size:14px;color:#000;letter-spacing:-0.212px;">0.0 °</span>
<span id="t40" class="t" style="left:1691.6px;top:1007.75px;font-size:14px;color:#000;letter-spacing:-0.766px;">Representar</span>
<span id="t41" class="t" style="left:1798.3px;top:1008.43px;font-size:13.2px;color:#000;letter-spacing:-0.788px;">EPSG:25830</span>
</body></html>
